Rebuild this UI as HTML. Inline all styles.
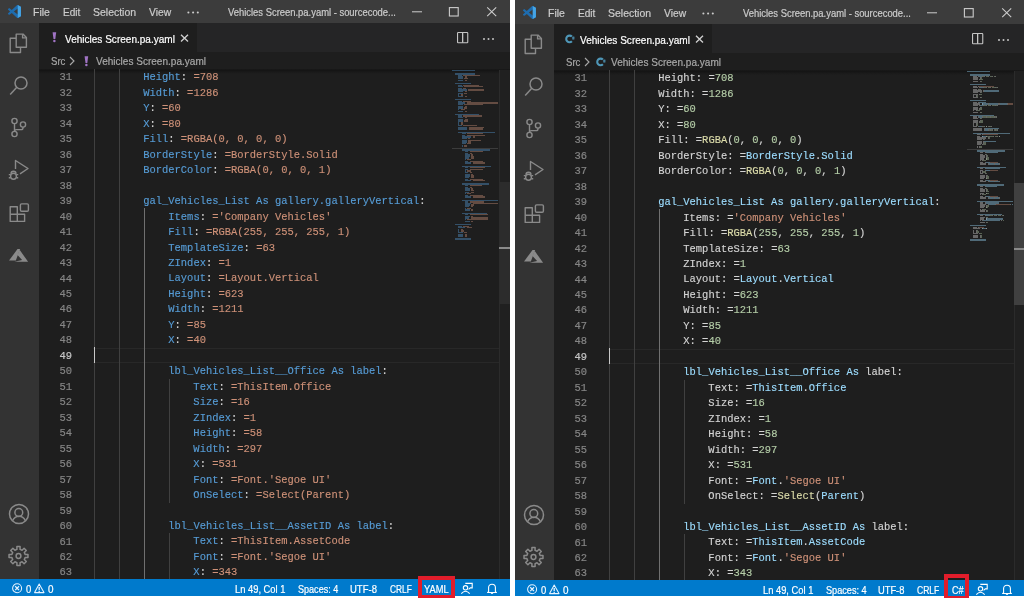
<!DOCTYPE html><html><head><meta charset="utf-8"><style>

*{margin:0;padding:0}
html,body{width:1024px;height:598px;overflow:hidden;background:#ffffff}
.win{position:absolute;height:598px}
.t{position:absolute;white-space:nowrap;font-family:"Liberation Sans",sans-serif;transform-origin:0 0;-webkit-text-stroke:0.2px}
.title{position:absolute;left:0;top:-1px;width:510px;height:24px;background:#3c3c3c}
.menu{position:absolute;top:5px;font:10.6px/14px "Liberation Sans",sans-serif;color:#cccccc;white-space:nowrap;transform-origin:0 0;transform:scaleX(0.96)}
.ttl{position:absolute;top:4.5px;font:10.6px/14px "Liberation Sans",sans-serif;color:#cccccc;white-space:nowrap;transform-origin:0 0;transform:scaleX(0.888)}
.act{position:absolute;left:0;top:23px;width:39px;height:556px;background:#333333}
.tabs{position:absolute;left:39px;top:23px;width:471px;height:28.6px;background:#252526}
.tab{position:absolute;left:39px;top:23px;width:158px;height:28.6px;background:#1e1e1e}
.tabt{position:absolute;top:31.3px;font:11.5px/14px "Liberation Sans",sans-serif;color:#ffffff;white-space:nowrap;transform-origin:0 0;transform:scaleX(0.883)}
.bc{position:absolute;top:54px;font:11px/14px "Liberation Sans",sans-serif;color:#a9a9a9;white-space:nowrap;transform-origin:0 0;transform:scaleX(0.913)}
.shadow{position:absolute;left:39px;top:51.6px;width:471px;height:528px;background:#1e1e1e}
.bshadow{position:absolute;left:39px;top:69px;width:471px;height:5px;background:linear-gradient(#191919,#151515 30%,#1a1a1a 65%,#1e1e1e)}
.curline{position:absolute;left:93px;width:406px;height:15.47px;box-sizing:border-box;border-top:1px solid #282828;border-bottom:1px solid #282828}
.guide{position:absolute;width:1px}
.ln{position:absolute;left:35.3px;width:37px;text-align:right;font:11.5px/15.47px "Liberation Mono",monospace;-webkit-text-stroke:0.2px;transform-origin:100% 0;transform:scaleX(0.909)}
.code{position:absolute;font:11.5px/15.47px "Liberation Mono",monospace;white-space:pre;color:#d4d4d4;-webkit-text-stroke:0.15px;transform-origin:0 0;transform:scaleX(0.90898)}
.mm{position:absolute;height:1.3px;opacity:.4}
.mmwrap{position:absolute;left:0;top:0;width:510px;height:598px;filter:blur(0.45px)}
.sbar{position:absolute;left:498.5px;top:70px;width:11.5px;height:509px;background:#202020;border-left:1px solid #2b2b2b;box-sizing:border-box}
.slider{position:absolute;left:499px;top:182px;width:11px;height:122px}
.status{position:absolute;left:0;top:578.8px;width:510px;height:16.9px;background:#007acc}
.st{position:absolute;top:581.3px;font:10.6px/15px "Liberation Sans",sans-serif;color:#ffffff;white-space:nowrap;transform-origin:0 0;transform:scaleX(0.86)}

</style></head><body>
<div class="win" style="left:0px;top:0px;width:510px">
<div class="title"></div>
<svg style="position:absolute;left:7.6px;top:4.8px" width="13" height="13" viewBox="0 0 100 100">
<path d="M96 10.8 75.4.9a6.2 6.2 0 0 0-7.1 1.2L29 38 11.9 25a4.1 4.1 0 0 0-5.3.2L1.1 30.3a4.1 4.1 0 0 0 0 6.1L15.9 50 1.1 63.6a4.1 4.1 0 0 0 0 6.1l5.5 5a4.1 4.1 0 0 0 5.3.2L29 62l39.3 35.9a6.2 6.2 0 0 0 7.1 1.2L96 89.2a6.2 6.2 0 0 0 3.5-5.6V16.4a6.2 6.2 0 0 0-3.5-5.6ZM75 72.7 45.1 50 75 27.3Z" fill="#1e6cae"/>
<path d="M75 0.9 75 99.1 96 89.2a6.2 6.2 0 0 0 3.5-5.6V16.4a6.2 6.2 0 0 0-3.5-5.6Z" fill="#45a5e6"/>
</svg>
<div class="t" style="left:33.36px;top:4.90px;font-size:10.75px;line-height:14px;color:#cccccc;transform:scaleX(0.9772);">File</div>
<div class="t" style="left:62.69px;top:4.90px;font-size:10.75px;line-height:14px;color:#cccccc;transform:scaleX(0.9388);">Edit</div>
<div class="t" style="left:93.28px;top:4.90px;font-size:10.75px;line-height:14px;color:#cccccc;transform:scaleX(0.9744);">Selection</div>
<div class="t" style="left:149.35px;top:4.90px;font-size:10.75px;line-height:14px;color:#cccccc;transform:scaleX(0.9584);">View</div>
<svg style="position:absolute;left:187px;top:10.7px" width="14" height="3" viewBox="0 0 14 3" fill="#cccccc"><circle cx="1.4" cy="1.5" r="1.05"/><circle cx="6.1" cy="1.5" r="1.05"/><circle cx="10.8" cy="1.5" r="1.05"/></svg>
<div class="t" style="left:228.15px;top:4.80px;font-size:10.75px;line-height:14px;color:#cccccc;transform:scaleX(0.8755);">Vehicles Screen.pa.yaml - sourcecode...</div>
<svg style="position:absolute;left:411px;top:6px" width="12" height="12" viewBox="0 0 12 12"><path d="M1 5.8h10" stroke="#cccccc" stroke-width="1"/></svg>
<svg style="position:absolute;left:448px;top:6px" width="12" height="12" viewBox="0 0 12 12"><rect x="1.4" y="1.6" width="8.8" height="8.4" fill="none" stroke="#cccccc" stroke-width="1.1"/></svg>
<svg style="position:absolute;left:486px;top:6px" width="12" height="12" viewBox="0 0 12 12"><path d="M1.2 1.4l9 8.7M10.2 1.4l-9 8.7" stroke="#cccccc" stroke-width="1.1"/></svg>
<div class="act"></div>
<svg style="position:absolute;left:9px;top:33px" width="20" height="21" viewBox="0 0 20 21" fill="none" stroke="#8a8a8a" stroke-width="1.4" stroke-linejoin="round">
<path d="M7.2 1.1H14l3.4 3.5v9.7H7.2z"/><path d="M13.6 1.3v3.6h3.6"/><path d="M7 5.3H1.2v14.2h10.3v-5"/></svg><svg style="position:absolute;left:9px;top:75px" width="20" height="21" viewBox="0 0 20 21" fill="none" stroke="#8a8a8a" stroke-width="1.5">
<circle cx="12" cy="8" r="6"/><path d="M7.8 12.3 1.2 19.5"/></svg><svg style="position:absolute;left:10px;top:116px" width="18" height="22" viewBox="0 0 18 22" fill="none" stroke="#8a8a8a" stroke-width="1.4">
<circle cx="4.5" cy="5" r="2.6"/><circle cx="4.5" cy="18" r="2.6"/><circle cx="13" cy="8.5" r="2.6"/><path d="M4.5 7.6v7.8"/><path d="M13 11.1v.6q0 1.9-1.9 1.9H6.4q-1.9 0-1.9 1.9"/></svg><svg style="position:absolute;left:8px;top:159px" width="22" height="22" viewBox="0 0 22 22" fill="none" stroke="#8a8a8a" stroke-width="1.4" stroke-linejoin="round">
<path d="M7.5 10V1.5L20 9.5 12 14.8"/><path d="M3 14.8a2.5 2.5 0 0 1 5 0"/><ellipse cx="5.5" cy="17.3" rx="2.9" ry="3"/><path d="M.8 15.6h1.8M8.4 15.6h1.8M.8 18.8h1.8M8.4 18.8h1.8"/></svg><svg style="position:absolute;left:9px;top:203px" width="21" height="20" viewBox="0 0 21 20" fill="none" stroke="#8a8a8a" stroke-width="1.4" stroke-linejoin="round">
<path d="M1.2 3.8H8.3V11.2H15.6V18.4H1.2Z"/><path d="M1.2 11.2H8.3V18.4"/><rect x="11.4" y="0.9" width="8" height="7.4" rx="1.2"/></svg><svg style="position:absolute;left:9px;top:247px" width="21" height="17" viewBox="0 0 21 17">
<path d="M8.5 2H11.1L6.8 13.6H0Z" fill="#8a8a8a"/><path d="M10.6 2.8 19.1 14.8H5.5L13.1 13 8.5 8Z" fill="#8a8a8a"/></svg><svg style="position:absolute;left:8px;top:503px" width="22" height="22" viewBox="0 0 22 22" fill="none" stroke="#8a8a8a" stroke-width="1.5">
<circle cx="11" cy="11" r="9.5"/><circle cx="10.8" cy="9.5" r="3.9"/><path d="M4.5 17.8c1.5-3 4-4.5 6.5-4.5s5 1.5 6.5 4.5"/></svg><svg style="position:absolute;left:7px;top:545px" width="23" height="23" viewBox="0 0 23 23" fill="none" stroke="#8a8a8a" stroke-width="1.5" stroke-linejoin="round">
<path d="M9.91 4.39 L9.92 1.53 L13.08 1.53 L13.09 4.39 L15.05 5.20 L17.08 3.19 L19.31 5.42 L17.30 7.45 L18.11 9.41 L20.97 9.42 L20.97 12.58 L18.11 12.59 L17.30 14.55 L19.31 16.58 L17.08 18.81 L15.05 16.80 L13.09 17.61 L13.08 20.47 L9.92 20.47 L9.91 17.61 L7.95 16.80 L5.92 18.81 L3.69 16.58 L5.70 14.55 L4.89 12.59 L2.03 12.58 L2.03 9.42 L4.89 9.41 L5.70 7.45 L3.69 5.42 L5.92 3.19 L7.95 5.20Z"/><circle cx="11.5" cy="11" r="2.4"/></svg>
<div class="tabs"></div>
<div class="tab"></div>
<svg style="position:absolute;left:52.2px;top:32.4px" width="5" height="11" viewBox="0 0 5 11">
<path d="M0.6 0.3H4.2L3.3 6.9H1.5Z" fill="#a074c4"/><circle cx="2.4" cy="9" r="1.25" fill="#a074c4"/></svg>
<div class="t" style="left:64.55px;top:31.55px;font-size:11.2px;line-height:14px;color:#ffffff;transform:scaleX(0.8970);">Vehicles Screen.pa.yaml</div>
<svg style="position:absolute;left:180px;top:34.3px" width="9" height="8" viewBox="0 0 9 8"><path d="M1 .8l7 6.6M8 .8l-7 6.6" stroke="#d0d0d0" stroke-width="1.35"/></svg>
<svg style="position:absolute;left:457px;top:32px" width="12" height="12" viewBox="0 0 12 12" fill="none" stroke="#c5c5c5" stroke-width="1.1"><rect x=".55" y=".55" width="10.2" height="10.2" rx=".6"/><path d="M5.65 .6v10.2" stroke-width="1.3"/></svg>
<svg style="position:absolute;left:482px;top:36.5px" width="14" height="4" viewBox="0 0 14 4" fill="#c5c5c5"><circle cx="2" cy="2" r="1"/><circle cx="6.5" cy="2" r="1"/><circle cx="11" cy="2" r="1"/></svg>
<div class="shadow"></div>
<svg style="position:absolute;left:84px;top:55.6px" width="5" height="11" viewBox="0 0 5 11">
<path d="M0.6 0.3H4.2L3.3 6.9H1.5Z" fill="#a074c4"/><circle cx="2.4" cy="9" r="1.25" fill="#a074c4"/></svg>
<div class="t" style="left:51.27px;top:54.35px;font-size:11.2px;line-height:14px;color:#a9a9a9;transform:scaleX(0.8554);">Src</div>
<svg style="position:absolute;left:69px;top:56px" width="6" height="10" viewBox="0 0 6 10"><path d="M1 1l4 4-4 4" fill="none" stroke="#a9a9a9" stroke-width="1.1"/></svg>
<div class="t" style="left:96.35px;top:54.35px;font-size:11.2px;line-height:14px;color:#a9a9a9;transform:scaleX(0.8978);">Vehicles Screen.pa.yaml</div>
<div class="bshadow"></div>
<div class="curline" style="top:347.56px"></div>
<div class="guide" style="left:93.60px;top:69.10px;height:15.77px;background:#404040"></div>
<div class="guide" style="left:118.69px;top:69.10px;height:15.77px;background:#404040"></div>
<div class="guide" style="left:93.60px;top:84.57px;height:15.77px;background:#404040"></div>
<div class="guide" style="left:118.69px;top:84.57px;height:15.77px;background:#404040"></div>
<div class="guide" style="left:93.60px;top:100.04px;height:15.77px;background:#404040"></div>
<div class="guide" style="left:118.69px;top:100.04px;height:15.77px;background:#404040"></div>
<div class="guide" style="left:93.60px;top:115.51px;height:15.77px;background:#404040"></div>
<div class="guide" style="left:118.69px;top:115.51px;height:15.77px;background:#404040"></div>
<div class="guide" style="left:93.60px;top:130.98px;height:15.77px;background:#404040"></div>
<div class="guide" style="left:118.69px;top:130.98px;height:15.77px;background:#404040"></div>
<div class="guide" style="left:93.60px;top:146.45px;height:15.77px;background:#404040"></div>
<div class="guide" style="left:118.69px;top:146.45px;height:15.77px;background:#404040"></div>
<div class="guide" style="left:93.60px;top:161.92px;height:15.77px;background:#404040"></div>
<div class="guide" style="left:118.69px;top:161.92px;height:15.77px;background:#404040"></div>
<div class="guide" style="left:93.60px;top:177.39px;height:15.77px;background:#404040"></div>
<div class="guide" style="left:118.69px;top:177.39px;height:15.77px;background:#404040"></div>
<div class="guide" style="left:93.60px;top:192.86px;height:15.77px;background:#404040"></div>
<div class="guide" style="left:118.69px;top:192.86px;height:15.77px;background:#404040"></div>
<div class="guide" style="left:93.60px;top:208.33px;height:15.77px;background:#404040"></div>
<div class="guide" style="left:118.69px;top:208.33px;height:15.77px;background:#404040"></div>
<div class="guide" style="left:143.78px;top:208.33px;height:15.77px;background:#707070"></div>
<div class="guide" style="left:93.60px;top:223.80px;height:15.77px;background:#404040"></div>
<div class="guide" style="left:118.69px;top:223.80px;height:15.77px;background:#404040"></div>
<div class="guide" style="left:143.78px;top:223.80px;height:15.77px;background:#707070"></div>
<div class="guide" style="left:93.60px;top:239.27px;height:15.77px;background:#404040"></div>
<div class="guide" style="left:118.69px;top:239.27px;height:15.77px;background:#404040"></div>
<div class="guide" style="left:143.78px;top:239.27px;height:15.77px;background:#707070"></div>
<div class="guide" style="left:93.60px;top:254.74px;height:15.77px;background:#404040"></div>
<div class="guide" style="left:118.69px;top:254.74px;height:15.77px;background:#404040"></div>
<div class="guide" style="left:143.78px;top:254.74px;height:15.77px;background:#707070"></div>
<div class="guide" style="left:93.60px;top:270.21px;height:15.77px;background:#404040"></div>
<div class="guide" style="left:118.69px;top:270.21px;height:15.77px;background:#404040"></div>
<div class="guide" style="left:143.78px;top:270.21px;height:15.77px;background:#707070"></div>
<div class="guide" style="left:93.60px;top:285.68px;height:15.77px;background:#404040"></div>
<div class="guide" style="left:118.69px;top:285.68px;height:15.77px;background:#404040"></div>
<div class="guide" style="left:143.78px;top:285.68px;height:15.77px;background:#707070"></div>
<div class="guide" style="left:93.60px;top:301.15px;height:15.77px;background:#404040"></div>
<div class="guide" style="left:118.69px;top:301.15px;height:15.77px;background:#404040"></div>
<div class="guide" style="left:143.78px;top:301.15px;height:15.77px;background:#707070"></div>
<div class="guide" style="left:93.60px;top:316.62px;height:15.77px;background:#404040"></div>
<div class="guide" style="left:118.69px;top:316.62px;height:15.77px;background:#404040"></div>
<div class="guide" style="left:143.78px;top:316.62px;height:15.77px;background:#707070"></div>
<div class="guide" style="left:93.60px;top:332.09px;height:15.77px;background:#404040"></div>
<div class="guide" style="left:118.69px;top:332.09px;height:15.77px;background:#404040"></div>
<div class="guide" style="left:143.78px;top:332.09px;height:15.77px;background:#707070"></div>
<div class="guide" style="left:93.60px;top:347.56px;height:15.77px;background:#404040"></div>
<div class="guide" style="left:118.69px;top:347.56px;height:15.77px;background:#404040"></div>
<div class="guide" style="left:143.78px;top:347.56px;height:15.77px;background:#707070"></div>
<div class="guide" style="left:93.60px;top:363.03px;height:15.77px;background:#404040"></div>
<div class="guide" style="left:118.69px;top:363.03px;height:15.77px;background:#404040"></div>
<div class="guide" style="left:143.78px;top:363.03px;height:15.77px;background:#707070"></div>
<div class="guide" style="left:93.60px;top:378.50px;height:15.77px;background:#404040"></div>
<div class="guide" style="left:118.69px;top:378.50px;height:15.77px;background:#404040"></div>
<div class="guide" style="left:143.78px;top:378.50px;height:15.77px;background:#707070"></div>
<div class="guide" style="left:168.86px;top:378.50px;height:15.77px;background:#404040"></div>
<div class="guide" style="left:93.60px;top:393.97px;height:15.77px;background:#404040"></div>
<div class="guide" style="left:118.69px;top:393.97px;height:15.77px;background:#404040"></div>
<div class="guide" style="left:143.78px;top:393.97px;height:15.77px;background:#707070"></div>
<div class="guide" style="left:168.86px;top:393.97px;height:15.77px;background:#404040"></div>
<div class="guide" style="left:93.60px;top:409.44px;height:15.77px;background:#404040"></div>
<div class="guide" style="left:118.69px;top:409.44px;height:15.77px;background:#404040"></div>
<div class="guide" style="left:143.78px;top:409.44px;height:15.77px;background:#707070"></div>
<div class="guide" style="left:168.86px;top:409.44px;height:15.77px;background:#404040"></div>
<div class="guide" style="left:93.60px;top:424.91px;height:15.77px;background:#404040"></div>
<div class="guide" style="left:118.69px;top:424.91px;height:15.77px;background:#404040"></div>
<div class="guide" style="left:143.78px;top:424.91px;height:15.77px;background:#707070"></div>
<div class="guide" style="left:168.86px;top:424.91px;height:15.77px;background:#404040"></div>
<div class="guide" style="left:93.60px;top:440.38px;height:15.77px;background:#404040"></div>
<div class="guide" style="left:118.69px;top:440.38px;height:15.77px;background:#404040"></div>
<div class="guide" style="left:143.78px;top:440.38px;height:15.77px;background:#707070"></div>
<div class="guide" style="left:168.86px;top:440.38px;height:15.77px;background:#404040"></div>
<div class="guide" style="left:93.60px;top:455.85px;height:15.77px;background:#404040"></div>
<div class="guide" style="left:118.69px;top:455.85px;height:15.77px;background:#404040"></div>
<div class="guide" style="left:143.78px;top:455.85px;height:15.77px;background:#707070"></div>
<div class="guide" style="left:168.86px;top:455.85px;height:15.77px;background:#404040"></div>
<div class="guide" style="left:93.60px;top:471.32px;height:15.77px;background:#404040"></div>
<div class="guide" style="left:118.69px;top:471.32px;height:15.77px;background:#404040"></div>
<div class="guide" style="left:143.78px;top:471.32px;height:15.77px;background:#707070"></div>
<div class="guide" style="left:168.86px;top:471.32px;height:15.77px;background:#404040"></div>
<div class="guide" style="left:93.60px;top:486.79px;height:15.77px;background:#404040"></div>
<div class="guide" style="left:118.69px;top:486.79px;height:15.77px;background:#404040"></div>
<div class="guide" style="left:143.78px;top:486.79px;height:15.77px;background:#707070"></div>
<div class="guide" style="left:168.86px;top:486.79px;height:15.77px;background:#404040"></div>
<div class="guide" style="left:93.60px;top:502.26px;height:15.77px;background:#404040"></div>
<div class="guide" style="left:118.69px;top:502.26px;height:15.77px;background:#404040"></div>
<div class="guide" style="left:143.78px;top:502.26px;height:15.77px;background:#707070"></div>
<div class="guide" style="left:93.60px;top:517.73px;height:15.77px;background:#404040"></div>
<div class="guide" style="left:118.69px;top:517.73px;height:15.77px;background:#404040"></div>
<div class="guide" style="left:143.78px;top:517.73px;height:15.77px;background:#707070"></div>
<div class="guide" style="left:93.60px;top:533.20px;height:15.77px;background:#404040"></div>
<div class="guide" style="left:118.69px;top:533.20px;height:15.77px;background:#404040"></div>
<div class="guide" style="left:143.78px;top:533.20px;height:15.77px;background:#707070"></div>
<div class="guide" style="left:168.86px;top:533.20px;height:15.77px;background:#404040"></div>
<div class="guide" style="left:93.60px;top:548.67px;height:15.77px;background:#404040"></div>
<div class="guide" style="left:118.69px;top:548.67px;height:15.77px;background:#404040"></div>
<div class="guide" style="left:143.78px;top:548.67px;height:15.77px;background:#707070"></div>
<div class="guide" style="left:168.86px;top:548.67px;height:15.77px;background:#404040"></div>
<div class="guide" style="left:93.60px;top:564.14px;height:15.77px;background:#404040"></div>
<div class="guide" style="left:118.69px;top:564.14px;height:15.77px;background:#404040"></div>
<div class="guide" style="left:143.78px;top:564.14px;height:15.77px;background:#707070"></div>
<div class="guide" style="left:168.86px;top:564.14px;height:15.77px;background:#404040"></div>
<div style="position:absolute;left:93.6px;top:347.06px;width:1.6px;height:15.67px;background:#c8c8c8"></div>
<div class="ln" style="top:69.40px;color:#858585">31</div>
<div class="ln" style="top:84.87px;color:#858585">32</div>
<div class="ln" style="top:100.34px;color:#858585">33</div>
<div class="ln" style="top:115.81px;color:#858585">34</div>
<div class="ln" style="top:131.28px;color:#858585">35</div>
<div class="ln" style="top:146.75px;color:#858585">36</div>
<div class="ln" style="top:162.22px;color:#858585">37</div>
<div class="ln" style="top:177.69px;color:#858585">38</div>
<div class="ln" style="top:193.16px;color:#858585">39</div>
<div class="ln" style="top:208.63px;color:#858585">40</div>
<div class="ln" style="top:224.10px;color:#858585">41</div>
<div class="ln" style="top:239.57px;color:#858585">42</div>
<div class="ln" style="top:255.04px;color:#858585">43</div>
<div class="ln" style="top:270.51px;color:#858585">44</div>
<div class="ln" style="top:285.98px;color:#858585">45</div>
<div class="ln" style="top:301.45px;color:#858585">46</div>
<div class="ln" style="top:316.92px;color:#858585">47</div>
<div class="ln" style="top:332.39px;color:#858585">48</div>
<div class="ln" style="top:347.86px;color:#c6c6c6">49</div>
<div class="ln" style="top:363.33px;color:#858585">50</div>
<div class="ln" style="top:378.80px;color:#858585">51</div>
<div class="ln" style="top:394.27px;color:#858585">52</div>
<div class="ln" style="top:409.74px;color:#858585">53</div>
<div class="ln" style="top:425.21px;color:#858585">54</div>
<div class="ln" style="top:440.68px;color:#858585">55</div>
<div class="ln" style="top:456.15px;color:#858585">56</div>
<div class="ln" style="top:471.62px;color:#858585">57</div>
<div class="ln" style="top:487.09px;color:#858585">58</div>
<div class="ln" style="top:502.56px;color:#858585">59</div>
<div class="ln" style="top:518.03px;color:#858585">60</div>
<div class="ln" style="top:533.50px;color:#858585">61</div>
<div class="ln" style="top:548.97px;color:#858585">62</div>
<div class="ln" style="top:564.44px;color:#858585">63</div>
<div class="code" style="top:69.39999999999999px;left:93.3px">        <span style="color:#569cd6">Height</span><span style="color:#d4d4d4">: </span><span style="color:#ce9178">=708</span><br>        <span style="color:#569cd6">Width</span><span style="color:#d4d4d4">: </span><span style="color:#ce9178">=1286</span><br>        <span style="color:#569cd6">Y</span><span style="color:#d4d4d4">: </span><span style="color:#ce9178">=60</span><br>        <span style="color:#569cd6">X</span><span style="color:#d4d4d4">: </span><span style="color:#ce9178">=80</span><br>        <span style="color:#569cd6">Fill</span><span style="color:#d4d4d4">: </span><span style="color:#ce9178">=RGBA(0, 0, 0, 0)</span><br>        <span style="color:#569cd6">BorderStyle</span><span style="color:#d4d4d4">: </span><span style="color:#ce9178">=BorderStyle.Solid</span><br>        <span style="color:#569cd6">BorderColor</span><span style="color:#d4d4d4">: </span><span style="color:#ce9178">=RGBA(0, 0, 0, 1)</span><br>&nbsp;<br>        <span style="color:#569cd6">gal_Vehicles_List As gallery.galleryVertical</span><span style="color:#d4d4d4">:</span><br>            <span style="color:#569cd6">Items</span><span style="color:#d4d4d4">: </span><span style="color:#ce9178">='Company Vehicles'</span><br>            <span style="color:#569cd6">Fill</span><span style="color:#d4d4d4">: </span><span style="color:#ce9178">=RGBA(255, 255, 255, 1)</span><br>            <span style="color:#569cd6">TemplateSize</span><span style="color:#d4d4d4">: </span><span style="color:#ce9178">=63</span><br>            <span style="color:#569cd6">ZIndex</span><span style="color:#d4d4d4">: </span><span style="color:#ce9178">=1</span><br>            <span style="color:#569cd6">Layout</span><span style="color:#d4d4d4">: </span><span style="color:#ce9178">=Layout.Vertical</span><br>            <span style="color:#569cd6">Height</span><span style="color:#d4d4d4">: </span><span style="color:#ce9178">=623</span><br>            <span style="color:#569cd6">Width</span><span style="color:#d4d4d4">: </span><span style="color:#ce9178">=1211</span><br>            <span style="color:#569cd6">Y</span><span style="color:#d4d4d4">: </span><span style="color:#ce9178">=85</span><br>            <span style="color:#569cd6">X</span><span style="color:#d4d4d4">: </span><span style="color:#ce9178">=40</span><br>&nbsp;<br>            <span style="color:#569cd6">lbl_Vehicles_List__Office As label</span><span style="color:#d4d4d4">:</span><br>                <span style="color:#569cd6">Text</span><span style="color:#d4d4d4">: </span><span style="color:#ce9178">=ThisItem.Office</span><br>                <span style="color:#569cd6">Size</span><span style="color:#d4d4d4">: </span><span style="color:#ce9178">=16</span><br>                <span style="color:#569cd6">ZIndex</span><span style="color:#d4d4d4">: </span><span style="color:#ce9178">=1</span><br>                <span style="color:#569cd6">Height</span><span style="color:#d4d4d4">: </span><span style="color:#ce9178">=58</span><br>                <span style="color:#569cd6">Width</span><span style="color:#d4d4d4">: </span><span style="color:#ce9178">=297</span><br>                <span style="color:#569cd6">X</span><span style="color:#d4d4d4">: </span><span style="color:#ce9178">=531</span><br>                <span style="color:#569cd6">Font</span><span style="color:#d4d4d4">: </span><span style="color:#ce9178">=Font.'Segoe UI'</span><br>                <span style="color:#569cd6">OnSelect</span><span style="color:#d4d4d4">: </span><span style="color:#ce9178">=Select(Parent)</span><br>&nbsp;<br>            <span style="color:#569cd6">lbl_Vehicles_List__AssetID As label</span><span style="color:#d4d4d4">:</span><br>                <span style="color:#569cd6">Text</span><span style="color:#d4d4d4">: </span><span style="color:#ce9178">=ThisItem.AssetCode</span><br>                <span style="color:#569cd6">Font</span><span style="color:#d4d4d4">: </span><span style="color:#ce9178">=Font.'Segoe UI'</span><br>                <span style="color:#569cd6">X</span><span style="color:#d4d4d4">: </span><span style="color:#ce9178">=343</span></div>
<div class="mmwrap"><div class="mm" style="left:452.00px;top:70.00px;width:22.68px;background:#569cd6"></div>
<div class="mm" style="left:455.24px;top:73.24px;width:20.25px;background:#569cd6"></div>
<div class="mm" style="left:458.48px;top:74.86px;width:3.24px;background:#569cd6"></div>
<div class="mm" style="left:463.34px;top:74.86px;width:17.01px;background:#ce9178"></div>
<div class="mm" style="left:458.48px;top:76.48px;width:4.86px;background:#569cd6"></div>
<div class="mm" style="left:464.96px;top:76.48px;width:2.43px;background:#ce9178"></div>
<div class="mm" style="left:458.48px;top:78.10px;width:4.05px;background:#569cd6"></div>
<div class="mm" style="left:464.15px;top:78.10px;width:4.05px;background:#ce9178"></div>
<div class="mm" style="left:458.48px;top:79.72px;width:4.86px;background:#569cd6"></div>
<div class="mm" style="left:464.96px;top:79.72px;width:1.62px;background:#ce9178"></div>
<div class="mm" style="left:455.24px;top:82.96px;width:15.39px;background:#569cd6"></div>
<div class="mm" style="left:458.48px;top:84.58px;width:3.24px;background:#569cd6"></div>
<div class="mm" style="left:463.34px;top:84.58px;width:15.39px;background:#ce9178"></div>
<div class="mm" style="left:458.48px;top:86.20px;width:4.05px;background:#569cd6"></div>
<div class="mm" style="left:464.15px;top:86.20px;width:18.63px;background:#ce9178"></div>
<div class="mm" style="left:458.48px;top:87.82px;width:3.24px;background:#569cd6"></div>
<div class="mm" style="left:463.34px;top:87.82px;width:2.43px;background:#ce9178"></div>
<div class="mm" style="left:458.48px;top:89.44px;width:8.10px;background:#569cd6"></div>
<div class="mm" style="left:468.20px;top:89.44px;width:16.20px;background:#ce9178"></div>
<div class="mm" style="left:458.48px;top:91.06px;width:4.86px;background:#569cd6"></div>
<div class="mm" style="left:464.96px;top:91.06px;width:2.43px;background:#ce9178"></div>
<div class="mm" style="left:458.48px;top:92.68px;width:4.05px;background:#569cd6"></div>
<div class="mm" style="left:464.15px;top:92.68px;width:3.24px;background:#ce9178"></div>
<div class="mm" style="left:458.48px;top:94.30px;width:0.81px;background:#569cd6"></div>
<div class="mm" style="left:460.91px;top:94.30px;width:2.43px;background:#ce9178"></div>
<div class="mm" style="left:458.48px;top:95.92px;width:4.86px;background:#569cd6"></div>
<div class="mm" style="left:464.96px;top:95.92px;width:1.62px;background:#ce9178"></div>
<div class="mm" style="left:455.24px;top:99.16px;width:16.20px;background:#569cd6"></div>
<div class="mm" style="left:458.48px;top:100.78px;width:3.24px;background:#569cd6"></div>
<div class="mm" style="left:463.34px;top:100.78px;width:7.29px;background:#ce9178"></div>
<div class="mm" style="left:458.48px;top:102.40px;width:6.48px;background:#569cd6"></div>
<div class="mm" style="left:466.58px;top:102.40px;width:31.42px;background:#ce9178"></div>
<div class="mm" style="left:458.48px;top:104.02px;width:4.05px;background:#569cd6"></div>
<div class="mm" style="left:464.15px;top:104.02px;width:18.63px;background:#ce9178"></div>
<div class="mm" style="left:458.48px;top:105.64px;width:4.86px;background:#569cd6"></div>
<div class="mm" style="left:464.96px;top:105.64px;width:2.43px;background:#ce9178"></div>
<div class="mm" style="left:458.48px;top:107.26px;width:4.05px;background:#569cd6"></div>
<div class="mm" style="left:464.15px;top:107.26px;width:2.43px;background:#ce9178"></div>
<div class="mm" style="left:458.48px;top:108.88px;width:0.81px;background:#569cd6"></div>
<div class="mm" style="left:460.91px;top:108.88px;width:4.05px;background:#ce9178"></div>
<div class="mm" style="left:458.48px;top:110.50px;width:4.86px;background:#569cd6"></div>
<div class="mm" style="left:464.96px;top:110.50px;width:1.62px;background:#ce9178"></div>
<div class="mm" style="left:455.24px;top:113.74px;width:23.49px;background:#569cd6"></div>
<div class="mm" style="left:458.48px;top:115.36px;width:3.24px;background:#569cd6"></div>
<div class="mm" style="left:463.34px;top:115.36px;width:18.63px;background:#ce9178"></div>
<div class="mm" style="left:458.48px;top:116.98px;width:4.86px;background:#569cd6"></div>
<div class="mm" style="left:464.96px;top:116.98px;width:1.62px;background:#ce9178"></div>
<div class="mm" style="left:458.48px;top:118.60px;width:4.86px;background:#569cd6"></div>
<div class="mm" style="left:464.96px;top:118.60px;width:3.24px;background:#ce9178"></div>
<div class="mm" style="left:458.48px;top:120.22px;width:4.05px;background:#569cd6"></div>
<div class="mm" style="left:464.15px;top:120.22px;width:4.05px;background:#ce9178"></div>
<div class="mm" style="left:458.48px;top:121.84px;width:0.81px;background:#569cd6"></div>
<div class="mm" style="left:460.91px;top:121.84px;width:2.43px;background:#ce9178"></div>
<div class="mm" style="left:458.48px;top:123.46px;width:0.81px;background:#569cd6"></div>
<div class="mm" style="left:460.91px;top:123.46px;width:2.43px;background:#ce9178"></div>
<div class="mm" style="left:458.48px;top:125.08px;width:3.24px;background:#569cd6"></div>
<div class="mm" style="left:463.34px;top:125.08px;width:13.77px;background:#ce9178"></div>
<div class="mm" style="left:458.48px;top:126.70px;width:8.91px;background:#569cd6"></div>
<div class="mm" style="left:469.01px;top:126.70px;width:14.58px;background:#ce9178"></div>
<div class="mm" style="left:458.48px;top:128.32px;width:8.91px;background:#569cd6"></div>
<div class="mm" style="left:469.01px;top:128.32px;width:13.77px;background:#ce9178"></div>
<div class="mm" style="left:458.48px;top:131.56px;width:36.45px;background:#569cd6"></div>
<div class="mm" style="left:461.72px;top:133.18px;width:4.05px;background:#569cd6"></div>
<div class="mm" style="left:467.39px;top:133.18px;width:15.39px;background:#ce9178"></div>
<div class="mm" style="left:461.72px;top:134.80px;width:3.24px;background:#569cd6"></div>
<div class="mm" style="left:466.58px;top:134.80px;width:18.63px;background:#ce9178"></div>
<div class="mm" style="left:461.72px;top:136.42px;width:9.72px;background:#569cd6"></div>
<div class="mm" style="left:473.06px;top:136.42px;width:2.43px;background:#ce9178"></div>
<div class="mm" style="left:461.72px;top:138.04px;width:4.86px;background:#569cd6"></div>
<div class="mm" style="left:468.20px;top:138.04px;width:1.62px;background:#ce9178"></div>
<div class="mm" style="left:461.72px;top:139.66px;width:4.86px;background:#569cd6"></div>
<div class="mm" style="left:468.20px;top:139.66px;width:12.96px;background:#ce9178"></div>
<div class="mm" style="left:461.72px;top:141.28px;width:4.86px;background:#569cd6"></div>
<div class="mm" style="left:468.20px;top:141.28px;width:3.24px;background:#ce9178"></div>
<div class="mm" style="left:461.72px;top:142.90px;width:4.05px;background:#569cd6"></div>
<div class="mm" style="left:467.39px;top:142.90px;width:4.05px;background:#ce9178"></div>
<div class="mm" style="left:461.72px;top:144.52px;width:0.81px;background:#569cd6"></div>
<div class="mm" style="left:464.15px;top:144.52px;width:2.43px;background:#ce9178"></div>
<div class="mm" style="left:461.72px;top:146.14px;width:0.81px;background:#569cd6"></div>
<div class="mm" style="left:464.15px;top:146.14px;width:2.43px;background:#ce9178"></div>
<div class="mm" style="left:461.72px;top:149.38px;width:28.35px;background:#569cd6"></div>
<div class="mm" style="left:464.96px;top:151.00px;width:3.24px;background:#569cd6"></div>
<div class="mm" style="left:469.82px;top:151.00px;width:12.96px;background:#ce9178"></div>
<div class="mm" style="left:464.96px;top:152.62px;width:3.24px;background:#569cd6"></div>
<div class="mm" style="left:469.82px;top:152.62px;width:2.43px;background:#ce9178"></div>
<div class="mm" style="left:464.96px;top:154.24px;width:4.86px;background:#569cd6"></div>
<div class="mm" style="left:471.44px;top:154.24px;width:1.62px;background:#ce9178"></div>
<div class="mm" style="left:464.96px;top:155.86px;width:4.86px;background:#569cd6"></div>
<div class="mm" style="left:471.44px;top:155.86px;width:2.43px;background:#ce9178"></div>
<div class="mm" style="left:464.96px;top:157.48px;width:4.05px;background:#569cd6"></div>
<div class="mm" style="left:470.63px;top:157.48px;width:3.24px;background:#ce9178"></div>
<div class="mm" style="left:464.96px;top:159.10px;width:0.81px;background:#569cd6"></div>
<div class="mm" style="left:467.39px;top:159.10px;width:3.24px;background:#ce9178"></div>
<div class="mm" style="left:464.96px;top:160.72px;width:3.24px;background:#569cd6"></div>
<div class="mm" style="left:469.82px;top:160.72px;width:12.96px;background:#ce9178"></div>
<div class="mm" style="left:464.96px;top:162.34px;width:6.48px;background:#569cd6"></div>
<div class="mm" style="left:473.06px;top:162.34px;width:12.15px;background:#ce9178"></div>
<div class="mm" style="left:461.72px;top:165.58px;width:29.16px;background:#569cd6"></div>
<div class="mm" style="left:464.96px;top:167.20px;width:3.24px;background:#569cd6"></div>
<div class="mm" style="left:469.82px;top:167.20px;width:15.39px;background:#ce9178"></div>
<div class="mm" style="left:464.96px;top:168.82px;width:3.24px;background:#569cd6"></div>
<div class="mm" style="left:469.82px;top:168.82px;width:12.96px;background:#ce9178"></div>
<div class="mm" style="left:464.96px;top:170.44px;width:0.81px;background:#569cd6"></div>
<div class="mm" style="left:467.39px;top:170.44px;width:3.24px;background:#ce9178"></div>
<div class="mm" style="left:464.96px;top:172.06px;width:3.24px;background:#569cd6"></div>
<div class="mm" style="left:469.82px;top:172.06px;width:2.43px;background:#ce9178"></div>
<div class="mm" style="left:464.96px;top:173.68px;width:4.86px;background:#569cd6"></div>
<div class="mm" style="left:471.44px;top:173.68px;width:1.62px;background:#ce9178"></div>
<div class="mm" style="left:464.96px;top:175.30px;width:4.86px;background:#569cd6"></div>
<div class="mm" style="left:471.44px;top:175.30px;width:2.43px;background:#ce9178"></div>
<div class="mm" style="left:464.96px;top:176.92px;width:4.05px;background:#569cd6"></div>
<div class="mm" style="left:470.63px;top:176.92px;width:3.24px;background:#ce9178"></div>
<div class="mm" style="left:464.96px;top:178.54px;width:3.24px;background:#569cd6"></div>
<div class="mm" style="left:469.82px;top:178.54px;width:12.96px;background:#ce9178"></div>
<div class="mm" style="left:464.96px;top:180.16px;width:6.48px;background:#569cd6"></div>
<div class="mm" style="left:473.06px;top:180.16px;width:12.15px;background:#ce9178"></div>
<div class="mm" style="left:461.72px;top:183.40px;width:27.54px;background:#569cd6"></div>
<div class="mm" style="left:464.96px;top:185.02px;width:3.24px;background:#569cd6"></div>
<div class="mm" style="left:469.82px;top:185.02px;width:12.15px;background:#ce9178"></div>
<div class="mm" style="left:464.96px;top:186.64px;width:3.24px;background:#569cd6"></div>
<div class="mm" style="left:469.82px;top:186.64px;width:2.43px;background:#ce9178"></div>
<div class="mm" style="left:464.96px;top:188.26px;width:4.86px;background:#569cd6"></div>
<div class="mm" style="left:471.44px;top:188.26px;width:1.62px;background:#ce9178"></div>
<div class="mm" style="left:464.96px;top:189.88px;width:4.86px;background:#569cd6"></div>
<div class="mm" style="left:471.44px;top:189.88px;width:2.43px;background:#ce9178"></div>
<div class="mm" style="left:464.96px;top:191.50px;width:4.05px;background:#569cd6"></div>
<div class="mm" style="left:470.63px;top:191.50px;width:3.24px;background:#ce9178"></div>
<div class="mm" style="left:464.96px;top:193.12px;width:0.81px;background:#569cd6"></div>
<div class="mm" style="left:467.39px;top:193.12px;width:3.24px;background:#ce9178"></div>
<div class="mm" style="left:464.96px;top:194.74px;width:3.24px;background:#569cd6"></div>
<div class="mm" style="left:469.82px;top:194.74px;width:12.96px;background:#ce9178"></div>
<div class="mm" style="left:464.96px;top:196.36px;width:6.48px;background:#569cd6"></div>
<div class="mm" style="left:473.06px;top:196.36px;width:12.15px;background:#ce9178"></div>
<div class="mm" style="left:461.72px;top:199.60px;width:36.28px;background:#569cd6"></div>
<div class="mm" style="left:464.96px;top:201.22px;width:3.24px;background:#569cd6"></div>
<div class="mm" style="left:469.82px;top:201.22px;width:14.58px;background:#ce9178"></div>
<div class="mm" style="left:464.96px;top:202.84px;width:6.48px;background:#569cd6"></div>
<div class="mm" style="left:473.06px;top:202.84px;width:24.94px;background:#ce9178"></div>
<div class="mm" style="left:464.96px;top:204.46px;width:4.86px;background:#569cd6"></div>
<div class="mm" style="left:471.44px;top:204.46px;width:2.43px;background:#ce9178"></div>
<div class="mm" style="left:464.96px;top:206.08px;width:4.05px;background:#569cd6"></div>
<div class="mm" style="left:470.63px;top:206.08px;width:2.43px;background:#ce9178"></div>
<div class="mm" style="left:464.96px;top:207.70px;width:0.81px;background:#569cd6"></div>
<div class="mm" style="left:467.39px;top:207.70px;width:4.05px;background:#ce9178"></div>
<div class="mm" style="left:464.96px;top:209.32px;width:4.86px;background:#569cd6"></div>
<div class="mm" style="left:471.44px;top:209.32px;width:1.62px;background:#ce9178"></div>
<div class="mm" style="left:461.72px;top:212.56px;width:25.11px;background:#569cd6"></div>
<div class="mm" style="left:464.96px;top:214.18px;width:3.24px;background:#569cd6"></div>
<div class="mm" style="left:469.82px;top:214.18px;width:18.63px;background:#ce9178"></div>
<div class="mm" style="left:464.96px;top:215.80px;width:4.86px;background:#569cd6"></div>
<div class="mm" style="left:471.44px;top:215.80px;width:1.62px;background:#ce9178"></div>
<div class="mm" style="left:464.96px;top:217.42px;width:4.05px;background:#569cd6"></div>
<div class="mm" style="left:470.63px;top:217.42px;width:17.01px;background:#ce9178"></div>
<div class="mm" style="left:464.96px;top:219.04px;width:0.81px;background:#569cd6"></div>
<div class="mm" style="left:467.39px;top:219.04px;width:21.06px;background:#ce9178"></div>
<div class="mm" style="left:464.96px;top:220.66px;width:4.86px;background:#569cd6"></div>
<div class="mm" style="left:471.44px;top:220.66px;width:1.62px;background:#ce9178"></div>
<div class="mm" style="left:455.24px;top:223.90px;width:15.39px;background:#569cd6"></div>
<div class="mm" style="left:458.48px;top:225.52px;width:3.24px;background:#569cd6"></div>
<div class="mm" style="left:463.34px;top:225.52px;width:5.67px;background:#ce9178"></div>
<div class="mm" style="left:458.48px;top:227.14px;width:6.48px;background:#569cd6"></div>
<div class="mm" style="left:466.58px;top:227.14px;width:5.67px;background:#ce9178"></div>
<div class="mm" style="left:458.48px;top:228.76px;width:0.81px;background:#569cd6"></div>
<div class="mm" style="left:460.91px;top:228.76px;width:2.43px;background:#ce9178"></div>
<div class="mm" style="left:458.48px;top:230.38px;width:0.81px;background:#569cd6"></div>
<div class="mm" style="left:460.91px;top:230.38px;width:3.24px;background:#ce9178"></div>
<div class="mm" style="left:458.48px;top:232.00px;width:4.05px;background:#569cd6"></div>
<div class="mm" style="left:464.15px;top:232.00px;width:3.24px;background:#ce9178"></div>
<div class="mm" style="left:458.48px;top:233.62px;width:4.86px;background:#569cd6"></div>
<div class="mm" style="left:464.96px;top:233.62px;width:2.43px;background:#ce9178"></div>
<div class="mm" style="left:458.48px;top:235.24px;width:4.86px;background:#569cd6"></div>
<div class="mm" style="left:464.96px;top:235.24px;width:1.62px;background:#ce9178"></div>
<div class="mm" style="left:455.24px;top:238.48px;width:15.39px;background:#569cd6"></div>
<div style="position:absolute;left:452px;top:147.76px;width:46px;height:1.2px;background:#3c3c3c"></div></div>
<div class="sbar"></div>
<div class="slider" style="background:#2c2c2c"></div>
<div style="position:absolute;left:499px;top:247px;width:11px;height:2px;background:#8a8a8a"></div>
<div class="status"></div>
<svg style="position:absolute;left:12px;top:583px" width="11" height="11" viewBox="0 0 11 11" fill="none" stroke="#e6f3ff" stroke-width="1.05"><circle cx="5.1" cy="5.2" r="4.5"/><path d="M3.2 3.3l3.8 3.8M7 3.3l-3.8 3.8" stroke-width="1.25"/></svg>
<div class="t" style="left:25.62px;top:581.70px;font-size:10.75px;line-height:14px;color:#ffffff;transform:scaleX(0.8813);">0</div>
<svg style="position:absolute;left:34px;top:582.5px" width="11" height="11" viewBox="0 0 11 11" fill="none" stroke="#e6f3ff" stroke-width="1.05" stroke-linejoin="round"><path d="M5.2 1 10 9.6H.6z"/><path d="M5.2 4v3.2M5.2 8v.9" stroke-width="1.3"/></svg>
<div class="t" style="left:47.60px;top:581.70px;font-size:10.75px;line-height:14px;color:#ffffff;transform:scaleX(0.9204);">0</div>
<div class="t" style="left:234.75px;top:581.70px;font-size:10.75px;line-height:14px;color:#ffffff;transform:scaleX(0.8701);">Ln 49, Col 1</div>
<div class="t" style="left:297.99px;top:581.70px;font-size:10.75px;line-height:14px;color:#ffffff;transform:scaleX(0.8430);">Spaces: 4</div>
<div class="t" style="left:350.29px;top:581.70px;font-size:10.75px;line-height:14px;color:#ffffff;transform:scaleX(0.8840);">UTF-8</div>
<div class="t" style="left:389.58px;top:581.70px;font-size:10.75px;line-height:14px;color:#ffffff;transform:scaleX(0.7752);">CRLF</div>
<div class="t" style="left:424.47px;top:581.70px;font-size:10.75px;line-height:14px;color:#ffffff;transform:scaleX(0.8639);">YAML</div>
<div style="position:absolute;left:418.3px;top:575.8px;width:36.70px;height:22.20px;box-sizing:border-box;border:4.6px solid #e21d2b;border-bottom-width:3.6px"></div>
<svg style="position:absolute;left:460px;top:582px" width="14" height="12" viewBox="0 0 14 12" fill="none" stroke="#fff" stroke-width="1.1"><circle cx="5.5" cy="5.8" r="2.2"/><path d="M1.3 11.6Q5.5 6.8 9.7 11.6"/><path d="M5.3 1.4H12.2V5.9H10.3L8.6 7.4"/></svg>
<svg style="position:absolute;left:487px;top:582.5px" width="10" height="11" viewBox="0 0 10 11" fill="none" stroke="#fff" stroke-width="1.1"><path d="M1.6 8.6V4.6a3.4 3.4 0 0 1 6.8 0v4l.8.9H.8z"/><path d="M3.9 10.3h2.2"/></svg>
</div>
<div class="win" style="left:515px;top:1px;width:509px">
<div class="title"></div>
<svg style="position:absolute;left:7.6px;top:4.8px" width="13" height="13" viewBox="0 0 100 100">
<path d="M96 10.8 75.4.9a6.2 6.2 0 0 0-7.1 1.2L29 38 11.9 25a4.1 4.1 0 0 0-5.3.2L1.1 30.3a4.1 4.1 0 0 0 0 6.1L15.9 50 1.1 63.6a4.1 4.1 0 0 0 0 6.1l5.5 5a4.1 4.1 0 0 0 5.3.2L29 62l39.3 35.9a6.2 6.2 0 0 0 7.1 1.2L96 89.2a6.2 6.2 0 0 0 3.5-5.6V16.4a6.2 6.2 0 0 0-3.5-5.6ZM75 72.7 45.1 50 75 27.3Z" fill="#1e6cae"/>
<path d="M75 0.9 75 99.1 96 89.2a6.2 6.2 0 0 0 3.5-5.6V16.4a6.2 6.2 0 0 0-3.5-5.6Z" fill="#45a5e6"/>
</svg>
<div class="t" style="left:33.36px;top:4.90px;font-size:10.75px;line-height:14px;color:#cccccc;transform:scaleX(0.9772);">File</div>
<div class="t" style="left:62.69px;top:4.90px;font-size:10.75px;line-height:14px;color:#cccccc;transform:scaleX(0.9388);">Edit</div>
<div class="t" style="left:93.28px;top:4.90px;font-size:10.75px;line-height:14px;color:#cccccc;transform:scaleX(0.9744);">Selection</div>
<div class="t" style="left:149.35px;top:4.90px;font-size:10.75px;line-height:14px;color:#cccccc;transform:scaleX(0.9584);">View</div>
<svg style="position:absolute;left:187px;top:10.7px" width="14" height="3" viewBox="0 0 14 3" fill="#cccccc"><circle cx="1.4" cy="1.5" r="1.05"/><circle cx="6.1" cy="1.5" r="1.05"/><circle cx="10.8" cy="1.5" r="1.05"/></svg>
<div class="t" style="left:228.15px;top:4.80px;font-size:10.75px;line-height:14px;color:#cccccc;transform:scaleX(0.8755);">Vehicles Screen.pa.yaml - sourcecode...</div>
<svg style="position:absolute;left:411px;top:6px" width="12" height="12" viewBox="0 0 12 12"><path d="M1 5.8h10" stroke="#cccccc" stroke-width="1"/></svg>
<svg style="position:absolute;left:448px;top:6px" width="12" height="12" viewBox="0 0 12 12"><rect x="1.4" y="1.6" width="8.8" height="8.4" fill="none" stroke="#cccccc" stroke-width="1.1"/></svg>
<svg style="position:absolute;left:486px;top:6px" width="12" height="12" viewBox="0 0 12 12"><path d="M1.2 1.4l9 8.7M10.2 1.4l-9 8.7" stroke="#cccccc" stroke-width="1.1"/></svg>
<div class="act"></div>
<svg style="position:absolute;left:9px;top:33px" width="20" height="21" viewBox="0 0 20 21" fill="none" stroke="#8a8a8a" stroke-width="1.4" stroke-linejoin="round">
<path d="M7.2 1.1H14l3.4 3.5v9.7H7.2z"/><path d="M13.6 1.3v3.6h3.6"/><path d="M7 5.3H1.2v14.2h10.3v-5"/></svg><svg style="position:absolute;left:9px;top:75px" width="20" height="21" viewBox="0 0 20 21" fill="none" stroke="#8a8a8a" stroke-width="1.5">
<circle cx="12" cy="8" r="6"/><path d="M7.8 12.3 1.2 19.5"/></svg><svg style="position:absolute;left:10px;top:116px" width="18" height="22" viewBox="0 0 18 22" fill="none" stroke="#8a8a8a" stroke-width="1.4">
<circle cx="4.5" cy="5" r="2.6"/><circle cx="4.5" cy="18" r="2.6"/><circle cx="13" cy="8.5" r="2.6"/><path d="M4.5 7.6v7.8"/><path d="M13 11.1v.6q0 1.9-1.9 1.9H6.4q-1.9 0-1.9 1.9"/></svg><svg style="position:absolute;left:8px;top:159px" width="22" height="22" viewBox="0 0 22 22" fill="none" stroke="#8a8a8a" stroke-width="1.4" stroke-linejoin="round">
<path d="M7.5 10V1.5L20 9.5 12 14.8"/><path d="M3 14.8a2.5 2.5 0 0 1 5 0"/><ellipse cx="5.5" cy="17.3" rx="2.9" ry="3"/><path d="M.8 15.6h1.8M8.4 15.6h1.8M.8 18.8h1.8M8.4 18.8h1.8"/></svg><svg style="position:absolute;left:9px;top:203px" width="21" height="20" viewBox="0 0 21 20" fill="none" stroke="#8a8a8a" stroke-width="1.4" stroke-linejoin="round">
<path d="M1.2 3.8H8.3V11.2H15.6V18.4H1.2Z"/><path d="M1.2 11.2H8.3V18.4"/><rect x="11.4" y="0.9" width="8" height="7.4" rx="1.2"/></svg><svg style="position:absolute;left:9px;top:247px" width="21" height="17" viewBox="0 0 21 17">
<path d="M8.5 2H11.1L6.8 13.6H0Z" fill="#8a8a8a"/><path d="M10.6 2.8 19.1 14.8H5.5L13.1 13 8.5 8Z" fill="#8a8a8a"/></svg><svg style="position:absolute;left:8px;top:503px" width="22" height="22" viewBox="0 0 22 22" fill="none" stroke="#8a8a8a" stroke-width="1.5">
<circle cx="11" cy="11" r="9.5"/><circle cx="10.8" cy="9.5" r="3.9"/><path d="M4.5 17.8c1.5-3 4-4.5 6.5-4.5s5 1.5 6.5 4.5"/></svg><svg style="position:absolute;left:7px;top:545px" width="23" height="23" viewBox="0 0 23 23" fill="none" stroke="#8a8a8a" stroke-width="1.5" stroke-linejoin="round">
<path d="M9.91 4.39 L9.92 1.53 L13.08 1.53 L13.09 4.39 L15.05 5.20 L17.08 3.19 L19.31 5.42 L17.30 7.45 L18.11 9.41 L20.97 9.42 L20.97 12.58 L18.11 12.59 L17.30 14.55 L19.31 16.58 L17.08 18.81 L15.05 16.80 L13.09 17.61 L13.08 20.47 L9.92 20.47 L9.91 17.61 L7.95 16.80 L5.92 18.81 L3.69 16.58 L5.70 14.55 L4.89 12.59 L2.03 12.58 L2.03 9.42 L4.89 9.41 L5.70 7.45 L3.69 5.42 L5.92 3.19 L7.95 5.20Z"/><circle cx="11.5" cy="11" r="2.4"/></svg>
<div class="tabs"></div>
<div class="tab"></div>
<svg style="position:absolute;left:49.5px;top:32.5px" width="10" height="10" viewBox="0 0 10 10">
<path d="M6.9 2.6A3.3 3.3 0 1 0 6.9 7.2" fill="none" stroke="#4f97b8" stroke-width="2.1"/><path d="M7.2 3.3h2.2M7.2 4.8h2.2M7.9 2.6v2.9M8.8 2.6v2.9" stroke="#4f97b8" stroke-width=".7"/></svg>
<div class="t" style="left:64.55px;top:31.55px;font-size:11.2px;line-height:14px;color:#ffffff;transform:scaleX(0.8970);">Vehicles Screen.pa.yaml</div>
<svg style="position:absolute;left:180px;top:34.3px" width="9" height="8" viewBox="0 0 9 8"><path d="M1 .8l7 6.6M8 .8l-7 6.6" stroke="#d0d0d0" stroke-width="1.35"/></svg>
<svg style="position:absolute;left:457px;top:32px" width="12" height="12" viewBox="0 0 12 12" fill="none" stroke="#c5c5c5" stroke-width="1.1"><rect x=".55" y=".55" width="10.2" height="10.2" rx=".6"/><path d="M5.65 .6v10.2" stroke-width="1.3"/></svg>
<svg style="position:absolute;left:482px;top:36.5px" width="14" height="4" viewBox="0 0 14 4" fill="#c5c5c5"><circle cx="2" cy="2" r="1"/><circle cx="6.5" cy="2" r="1"/><circle cx="11" cy="2" r="1"/></svg>
<div class="shadow"></div>
<svg style="position:absolute;left:80.5px;top:55.5px" width="10" height="10" viewBox="0 0 10 10">
<path d="M6.9 2.6A3.3 3.3 0 1 0 6.9 7.2" fill="none" stroke="#4f97b8" stroke-width="2.1"/><path d="M7.2 3.3h2.2M7.2 4.8h2.2M7.9 2.6v2.9M8.8 2.6v2.9" stroke="#4f97b8" stroke-width=".7"/></svg>
<div class="t" style="left:51.27px;top:54.35px;font-size:11.2px;line-height:14px;color:#a9a9a9;transform:scaleX(0.8554);">Src</div>
<svg style="position:absolute;left:69px;top:56px" width="6" height="10" viewBox="0 0 6 10"><path d="M1 1l4 4-4 4" fill="none" stroke="#a9a9a9" stroke-width="1.1"/></svg>
<div class="t" style="left:96.35px;top:54.35px;font-size:11.2px;line-height:14px;color:#a9a9a9;transform:scaleX(0.8978);">Vehicles Screen.pa.yaml</div>
<div class="bshadow"></div>
<div class="curline" style="top:347.56px"></div>
<div class="guide" style="left:93.60px;top:69.10px;height:15.77px;background:#404040"></div>
<div class="guide" style="left:118.69px;top:69.10px;height:15.77px;background:#404040"></div>
<div class="guide" style="left:93.60px;top:84.57px;height:15.77px;background:#404040"></div>
<div class="guide" style="left:118.69px;top:84.57px;height:15.77px;background:#404040"></div>
<div class="guide" style="left:93.60px;top:100.04px;height:15.77px;background:#404040"></div>
<div class="guide" style="left:118.69px;top:100.04px;height:15.77px;background:#404040"></div>
<div class="guide" style="left:93.60px;top:115.51px;height:15.77px;background:#404040"></div>
<div class="guide" style="left:118.69px;top:115.51px;height:15.77px;background:#404040"></div>
<div class="guide" style="left:93.60px;top:130.98px;height:15.77px;background:#404040"></div>
<div class="guide" style="left:118.69px;top:130.98px;height:15.77px;background:#404040"></div>
<div class="guide" style="left:93.60px;top:146.45px;height:15.77px;background:#404040"></div>
<div class="guide" style="left:118.69px;top:146.45px;height:15.77px;background:#404040"></div>
<div class="guide" style="left:93.60px;top:161.92px;height:15.77px;background:#404040"></div>
<div class="guide" style="left:118.69px;top:161.92px;height:15.77px;background:#404040"></div>
<div class="guide" style="left:93.60px;top:177.39px;height:15.77px;background:#404040"></div>
<div class="guide" style="left:118.69px;top:177.39px;height:15.77px;background:#404040"></div>
<div class="guide" style="left:93.60px;top:192.86px;height:15.77px;background:#404040"></div>
<div class="guide" style="left:118.69px;top:192.86px;height:15.77px;background:#404040"></div>
<div class="guide" style="left:93.60px;top:208.33px;height:15.77px;background:#404040"></div>
<div class="guide" style="left:118.69px;top:208.33px;height:15.77px;background:#404040"></div>
<div class="guide" style="left:143.78px;top:208.33px;height:15.77px;background:#707070"></div>
<div class="guide" style="left:93.60px;top:223.80px;height:15.77px;background:#404040"></div>
<div class="guide" style="left:118.69px;top:223.80px;height:15.77px;background:#404040"></div>
<div class="guide" style="left:143.78px;top:223.80px;height:15.77px;background:#707070"></div>
<div class="guide" style="left:93.60px;top:239.27px;height:15.77px;background:#404040"></div>
<div class="guide" style="left:118.69px;top:239.27px;height:15.77px;background:#404040"></div>
<div class="guide" style="left:143.78px;top:239.27px;height:15.77px;background:#707070"></div>
<div class="guide" style="left:93.60px;top:254.74px;height:15.77px;background:#404040"></div>
<div class="guide" style="left:118.69px;top:254.74px;height:15.77px;background:#404040"></div>
<div class="guide" style="left:143.78px;top:254.74px;height:15.77px;background:#707070"></div>
<div class="guide" style="left:93.60px;top:270.21px;height:15.77px;background:#404040"></div>
<div class="guide" style="left:118.69px;top:270.21px;height:15.77px;background:#404040"></div>
<div class="guide" style="left:143.78px;top:270.21px;height:15.77px;background:#707070"></div>
<div class="guide" style="left:93.60px;top:285.68px;height:15.77px;background:#404040"></div>
<div class="guide" style="left:118.69px;top:285.68px;height:15.77px;background:#404040"></div>
<div class="guide" style="left:143.78px;top:285.68px;height:15.77px;background:#707070"></div>
<div class="guide" style="left:93.60px;top:301.15px;height:15.77px;background:#404040"></div>
<div class="guide" style="left:118.69px;top:301.15px;height:15.77px;background:#404040"></div>
<div class="guide" style="left:143.78px;top:301.15px;height:15.77px;background:#707070"></div>
<div class="guide" style="left:93.60px;top:316.62px;height:15.77px;background:#404040"></div>
<div class="guide" style="left:118.69px;top:316.62px;height:15.77px;background:#404040"></div>
<div class="guide" style="left:143.78px;top:316.62px;height:15.77px;background:#707070"></div>
<div class="guide" style="left:93.60px;top:332.09px;height:15.77px;background:#404040"></div>
<div class="guide" style="left:118.69px;top:332.09px;height:15.77px;background:#404040"></div>
<div class="guide" style="left:143.78px;top:332.09px;height:15.77px;background:#707070"></div>
<div class="guide" style="left:93.60px;top:347.56px;height:15.77px;background:#404040"></div>
<div class="guide" style="left:118.69px;top:347.56px;height:15.77px;background:#404040"></div>
<div class="guide" style="left:143.78px;top:347.56px;height:15.77px;background:#707070"></div>
<div class="guide" style="left:93.60px;top:363.03px;height:15.77px;background:#404040"></div>
<div class="guide" style="left:118.69px;top:363.03px;height:15.77px;background:#404040"></div>
<div class="guide" style="left:143.78px;top:363.03px;height:15.77px;background:#707070"></div>
<div class="guide" style="left:93.60px;top:378.50px;height:15.77px;background:#404040"></div>
<div class="guide" style="left:118.69px;top:378.50px;height:15.77px;background:#404040"></div>
<div class="guide" style="left:143.78px;top:378.50px;height:15.77px;background:#707070"></div>
<div class="guide" style="left:168.86px;top:378.50px;height:15.77px;background:#404040"></div>
<div class="guide" style="left:93.60px;top:393.97px;height:15.77px;background:#404040"></div>
<div class="guide" style="left:118.69px;top:393.97px;height:15.77px;background:#404040"></div>
<div class="guide" style="left:143.78px;top:393.97px;height:15.77px;background:#707070"></div>
<div class="guide" style="left:168.86px;top:393.97px;height:15.77px;background:#404040"></div>
<div class="guide" style="left:93.60px;top:409.44px;height:15.77px;background:#404040"></div>
<div class="guide" style="left:118.69px;top:409.44px;height:15.77px;background:#404040"></div>
<div class="guide" style="left:143.78px;top:409.44px;height:15.77px;background:#707070"></div>
<div class="guide" style="left:168.86px;top:409.44px;height:15.77px;background:#404040"></div>
<div class="guide" style="left:93.60px;top:424.91px;height:15.77px;background:#404040"></div>
<div class="guide" style="left:118.69px;top:424.91px;height:15.77px;background:#404040"></div>
<div class="guide" style="left:143.78px;top:424.91px;height:15.77px;background:#707070"></div>
<div class="guide" style="left:168.86px;top:424.91px;height:15.77px;background:#404040"></div>
<div class="guide" style="left:93.60px;top:440.38px;height:15.77px;background:#404040"></div>
<div class="guide" style="left:118.69px;top:440.38px;height:15.77px;background:#404040"></div>
<div class="guide" style="left:143.78px;top:440.38px;height:15.77px;background:#707070"></div>
<div class="guide" style="left:168.86px;top:440.38px;height:15.77px;background:#404040"></div>
<div class="guide" style="left:93.60px;top:455.85px;height:15.77px;background:#404040"></div>
<div class="guide" style="left:118.69px;top:455.85px;height:15.77px;background:#404040"></div>
<div class="guide" style="left:143.78px;top:455.85px;height:15.77px;background:#707070"></div>
<div class="guide" style="left:168.86px;top:455.85px;height:15.77px;background:#404040"></div>
<div class="guide" style="left:93.60px;top:471.32px;height:15.77px;background:#404040"></div>
<div class="guide" style="left:118.69px;top:471.32px;height:15.77px;background:#404040"></div>
<div class="guide" style="left:143.78px;top:471.32px;height:15.77px;background:#707070"></div>
<div class="guide" style="left:168.86px;top:471.32px;height:15.77px;background:#404040"></div>
<div class="guide" style="left:93.60px;top:486.79px;height:15.77px;background:#404040"></div>
<div class="guide" style="left:118.69px;top:486.79px;height:15.77px;background:#404040"></div>
<div class="guide" style="left:143.78px;top:486.79px;height:15.77px;background:#707070"></div>
<div class="guide" style="left:168.86px;top:486.79px;height:15.77px;background:#404040"></div>
<div class="guide" style="left:93.60px;top:502.26px;height:15.77px;background:#404040"></div>
<div class="guide" style="left:118.69px;top:502.26px;height:15.77px;background:#404040"></div>
<div class="guide" style="left:143.78px;top:502.26px;height:15.77px;background:#707070"></div>
<div class="guide" style="left:93.60px;top:517.73px;height:15.77px;background:#404040"></div>
<div class="guide" style="left:118.69px;top:517.73px;height:15.77px;background:#404040"></div>
<div class="guide" style="left:143.78px;top:517.73px;height:15.77px;background:#707070"></div>
<div class="guide" style="left:93.60px;top:533.20px;height:15.77px;background:#404040"></div>
<div class="guide" style="left:118.69px;top:533.20px;height:15.77px;background:#404040"></div>
<div class="guide" style="left:143.78px;top:533.20px;height:15.77px;background:#707070"></div>
<div class="guide" style="left:168.86px;top:533.20px;height:15.77px;background:#404040"></div>
<div class="guide" style="left:93.60px;top:548.67px;height:15.77px;background:#404040"></div>
<div class="guide" style="left:118.69px;top:548.67px;height:15.77px;background:#404040"></div>
<div class="guide" style="left:143.78px;top:548.67px;height:15.77px;background:#707070"></div>
<div class="guide" style="left:168.86px;top:548.67px;height:15.77px;background:#404040"></div>
<div class="guide" style="left:93.60px;top:564.14px;height:15.77px;background:#404040"></div>
<div class="guide" style="left:118.69px;top:564.14px;height:15.77px;background:#404040"></div>
<div class="guide" style="left:143.78px;top:564.14px;height:15.77px;background:#707070"></div>
<div class="guide" style="left:168.86px;top:564.14px;height:15.77px;background:#404040"></div>
<div style="position:absolute;left:93.6px;top:347.06px;width:1.6px;height:15.67px;background:#c8c8c8"></div>
<div class="ln" style="top:69.40px;color:#858585">31</div>
<div class="ln" style="top:84.87px;color:#858585">32</div>
<div class="ln" style="top:100.34px;color:#858585">33</div>
<div class="ln" style="top:115.81px;color:#858585">34</div>
<div class="ln" style="top:131.28px;color:#858585">35</div>
<div class="ln" style="top:146.75px;color:#858585">36</div>
<div class="ln" style="top:162.22px;color:#858585">37</div>
<div class="ln" style="top:177.69px;color:#858585">38</div>
<div class="ln" style="top:193.16px;color:#858585">39</div>
<div class="ln" style="top:208.63px;color:#858585">40</div>
<div class="ln" style="top:224.10px;color:#858585">41</div>
<div class="ln" style="top:239.57px;color:#858585">42</div>
<div class="ln" style="top:255.04px;color:#858585">43</div>
<div class="ln" style="top:270.51px;color:#858585">44</div>
<div class="ln" style="top:285.98px;color:#858585">45</div>
<div class="ln" style="top:301.45px;color:#858585">46</div>
<div class="ln" style="top:316.92px;color:#858585">47</div>
<div class="ln" style="top:332.39px;color:#858585">48</div>
<div class="ln" style="top:347.86px;color:#c6c6c6">49</div>
<div class="ln" style="top:363.33px;color:#858585">50</div>
<div class="ln" style="top:378.80px;color:#858585">51</div>
<div class="ln" style="top:394.27px;color:#858585">52</div>
<div class="ln" style="top:409.74px;color:#858585">53</div>
<div class="ln" style="top:425.21px;color:#858585">54</div>
<div class="ln" style="top:440.68px;color:#858585">55</div>
<div class="ln" style="top:456.15px;color:#858585">56</div>
<div class="ln" style="top:471.62px;color:#858585">57</div>
<div class="ln" style="top:487.09px;color:#858585">58</div>
<div class="ln" style="top:502.56px;color:#858585">59</div>
<div class="ln" style="top:518.03px;color:#858585">60</div>
<div class="ln" style="top:533.50px;color:#858585">61</div>
<div class="ln" style="top:548.97px;color:#858585">62</div>
<div class="ln" style="top:564.44px;color:#858585">63</div>
<div class="code" style="top:69.39999999999999px;left:93.3px">        <span style="color:#d4d4d4">Height</span><span style="color:#d4d4d4">: </span><span style="color:#d4d4d4">=</span><span style="color:#b5cea8">708</span><br>        <span style="color:#d4d4d4">Width</span><span style="color:#d4d4d4">: </span><span style="color:#d4d4d4">=</span><span style="color:#b5cea8">1286</span><br>        <span style="color:#d4d4d4">Y</span><span style="color:#d4d4d4">: </span><span style="color:#d4d4d4">=</span><span style="color:#b5cea8">60</span><br>        <span style="color:#d4d4d4">X</span><span style="color:#d4d4d4">: </span><span style="color:#d4d4d4">=</span><span style="color:#b5cea8">80</span><br>        <span style="color:#d4d4d4">Fill</span><span style="color:#d4d4d4">: </span><span style="color:#d4d4d4">=</span><span style="color:#dcdcaa">RGBA</span><span style="color:#d4d4d4">(</span><span style="color:#b5cea8">0</span><span style="color:#d4d4d4">,</span><span style="color:#d4d4d4"> </span><span style="color:#b5cea8">0</span><span style="color:#d4d4d4">,</span><span style="color:#d4d4d4"> </span><span style="color:#b5cea8">0</span><span style="color:#d4d4d4">,</span><span style="color:#d4d4d4"> </span><span style="color:#b5cea8">0</span><span style="color:#d4d4d4">)</span><br>        <span style="color:#d4d4d4">BorderStyle</span><span style="color:#d4d4d4">: </span><span style="color:#d4d4d4">=</span><span style="color:#9cdcfe">BorderStyle</span><span style="color:#d4d4d4">.</span><span style="color:#9cdcfe">Solid</span><br>        <span style="color:#d4d4d4">BorderColor</span><span style="color:#d4d4d4">: </span><span style="color:#d4d4d4">=</span><span style="color:#dcdcaa">RGBA</span><span style="color:#d4d4d4">(</span><span style="color:#b5cea8">0</span><span style="color:#d4d4d4">,</span><span style="color:#d4d4d4"> </span><span style="color:#b5cea8">0</span><span style="color:#d4d4d4">,</span><span style="color:#d4d4d4"> </span><span style="color:#b5cea8">0</span><span style="color:#d4d4d4">,</span><span style="color:#d4d4d4"> </span><span style="color:#b5cea8">1</span><span style="color:#d4d4d4">)</span><br>&nbsp;<br>        <span style="color:#9cdcfe">gal_Vehicles_List As gallery.galleryVertical</span><span style="color:#d4d4d4">:</span><br>            <span style="color:#d4d4d4">Items</span><span style="color:#d4d4d4">: </span><span style="color:#d4d4d4">=</span><span style="color:#ce9178">'Company Vehicles'</span><br>            <span style="color:#d4d4d4">Fill</span><span style="color:#d4d4d4">: </span><span style="color:#d4d4d4">=</span><span style="color:#dcdcaa">RGBA</span><span style="color:#d4d4d4">(</span><span style="color:#b5cea8">255</span><span style="color:#d4d4d4">,</span><span style="color:#d4d4d4"> </span><span style="color:#b5cea8">255</span><span style="color:#d4d4d4">,</span><span style="color:#d4d4d4"> </span><span style="color:#b5cea8">255</span><span style="color:#d4d4d4">,</span><span style="color:#d4d4d4"> </span><span style="color:#b5cea8">1</span><span style="color:#d4d4d4">)</span><br>            <span style="color:#d4d4d4">TemplateSize</span><span style="color:#d4d4d4">: </span><span style="color:#d4d4d4">=</span><span style="color:#b5cea8">63</span><br>            <span style="color:#d4d4d4">ZIndex</span><span style="color:#d4d4d4">: </span><span style="color:#d4d4d4">=</span><span style="color:#b5cea8">1</span><br>            <span style="color:#d4d4d4">Layout</span><span style="color:#d4d4d4">: </span><span style="color:#d4d4d4">=</span><span style="color:#9cdcfe">Layout</span><span style="color:#d4d4d4">.</span><span style="color:#9cdcfe">Vertical</span><br>            <span style="color:#d4d4d4">Height</span><span style="color:#d4d4d4">: </span><span style="color:#d4d4d4">=</span><span style="color:#b5cea8">623</span><br>            <span style="color:#d4d4d4">Width</span><span style="color:#d4d4d4">: </span><span style="color:#d4d4d4">=</span><span style="color:#b5cea8">1211</span><br>            <span style="color:#d4d4d4">Y</span><span style="color:#d4d4d4">: </span><span style="color:#d4d4d4">=</span><span style="color:#b5cea8">85</span><br>            <span style="color:#d4d4d4">X</span><span style="color:#d4d4d4">: </span><span style="color:#d4d4d4">=</span><span style="color:#b5cea8">40</span><br>&nbsp;<br>            <span style="color:#9cdcfe">lbl_Vehicles_List__Office As </span><span style="color:#d4d4d4">label</span><span style="color:#d4d4d4">:</span><br>                <span style="color:#d4d4d4">Text</span><span style="color:#d4d4d4">: </span><span style="color:#d4d4d4">=</span><span style="color:#9cdcfe">ThisItem</span><span style="color:#d4d4d4">.</span><span style="color:#9cdcfe">Office</span><br>                <span style="color:#d4d4d4">Size</span><span style="color:#d4d4d4">: </span><span style="color:#d4d4d4">=</span><span style="color:#b5cea8">16</span><br>                <span style="color:#d4d4d4">ZIndex</span><span style="color:#d4d4d4">: </span><span style="color:#d4d4d4">=</span><span style="color:#b5cea8">1</span><br>                <span style="color:#d4d4d4">Height</span><span style="color:#d4d4d4">: </span><span style="color:#d4d4d4">=</span><span style="color:#b5cea8">58</span><br>                <span style="color:#d4d4d4">Width</span><span style="color:#d4d4d4">: </span><span style="color:#d4d4d4">=</span><span style="color:#b5cea8">297</span><br>                <span style="color:#d4d4d4">X</span><span style="color:#d4d4d4">: </span><span style="color:#d4d4d4">=</span><span style="color:#b5cea8">531</span><br>                <span style="color:#d4d4d4">Font</span><span style="color:#d4d4d4">: </span><span style="color:#d4d4d4">=</span><span style="color:#9cdcfe">Font</span><span style="color:#d4d4d4">.</span><span style="color:#ce9178">'Segoe UI'</span><br>                <span style="color:#d4d4d4">OnSelect</span><span style="color:#d4d4d4">: </span><span style="color:#d4d4d4">=</span><span style="color:#dcdcaa">Select</span><span style="color:#d4d4d4">(</span><span style="color:#9cdcfe">Parent</span><span style="color:#d4d4d4">)</span><br>&nbsp;<br>            <span style="color:#9cdcfe">lbl_Vehicles_List__AssetID As </span><span style="color:#d4d4d4">label</span><span style="color:#d4d4d4">:</span><br>                <span style="color:#d4d4d4">Text</span><span style="color:#d4d4d4">: </span><span style="color:#d4d4d4">=</span><span style="color:#9cdcfe">ThisItem</span><span style="color:#d4d4d4">.</span><span style="color:#9cdcfe">AssetCode</span><br>                <span style="color:#d4d4d4">Font</span><span style="color:#d4d4d4">: </span><span style="color:#d4d4d4">=</span><span style="color:#9cdcfe">Font</span><span style="color:#d4d4d4">.</span><span style="color:#ce9178">'Segoe UI'</span><br>                <span style="color:#d4d4d4">X</span><span style="color:#d4d4d4">: </span><span style="color:#d4d4d4">=</span><span style="color:#b5cea8">343</span></div>
<div class="mmwrap"><div class="mm" style="left:452.00px;top:70.00px;width:22.68px;background:#9cdcfe"></div>
<div class="mm" style="left:455.24px;top:73.24px;width:20.25px;background:#9cdcfe"></div>
<div class="mm" style="left:458.48px;top:74.86px;width:3.24px;background:#d4d4d4"></div>
<div class="mm" style="left:463.34px;top:74.86px;width:0.81px;background:#d4d4d4"></div>
<div class="mm" style="left:464.15px;top:74.86px;width:3.24px;background:#9cdcfe"></div>
<div class="mm" style="left:467.39px;top:74.86px;width:0.81px;background:#d4d4d4"></div>
<div class="mm" style="left:468.20px;top:74.86px;width:0.81px;background:#b5cea8"></div>
<div class="mm" style="left:469.01px;top:74.86px;width:0.81px;background:#d4d4d4"></div>
<div class="mm" style="left:470.63px;top:74.86px;width:2.43px;background:#b5cea8"></div>
<div class="mm" style="left:473.06px;top:74.86px;width:0.81px;background:#d4d4d4"></div>
<div class="mm" style="left:474.68px;top:74.86px;width:2.43px;background:#b5cea8"></div>
<div class="mm" style="left:477.11px;top:74.86px;width:0.81px;background:#d4d4d4"></div>
<div class="mm" style="left:478.73px;top:74.86px;width:0.81px;background:#b5cea8"></div>
<div class="mm" style="left:479.54px;top:74.86px;width:0.81px;background:#d4d4d4"></div>
<div class="mm" style="left:458.48px;top:76.48px;width:4.86px;background:#d4d4d4"></div>
<div class="mm" style="left:464.96px;top:76.48px;width:0.81px;background:#d4d4d4"></div>
<div class="mm" style="left:465.77px;top:76.48px;width:1.62px;background:#b5cea8"></div>
<div class="mm" style="left:458.48px;top:78.10px;width:4.05px;background:#d4d4d4"></div>
<div class="mm" style="left:464.15px;top:78.10px;width:0.81px;background:#d4d4d4"></div>
<div class="mm" style="left:464.96px;top:78.10px;width:3.24px;background:#b5cea8"></div>
<div class="mm" style="left:458.48px;top:79.72px;width:4.86px;background:#d4d4d4"></div>
<div class="mm" style="left:464.96px;top:79.72px;width:0.81px;background:#d4d4d4"></div>
<div class="mm" style="left:465.77px;top:79.72px;width:0.81px;background:#b5cea8"></div>
<div class="mm" style="left:455.24px;top:82.96px;width:15.39px;background:#9cdcfe"></div>
<div class="mm" style="left:458.48px;top:84.58px;width:3.24px;background:#d4d4d4"></div>
<div class="mm" style="left:463.34px;top:84.58px;width:0.81px;background:#d4d4d4"></div>
<div class="mm" style="left:464.15px;top:84.58px;width:14.58px;background:#ce9178"></div>
<div class="mm" style="left:458.48px;top:86.20px;width:4.05px;background:#d4d4d4"></div>
<div class="mm" style="left:464.15px;top:86.20px;width:0.81px;background:#d4d4d4"></div>
<div class="mm" style="left:464.96px;top:86.20px;width:3.24px;background:#9cdcfe"></div>
<div class="mm" style="left:468.20px;top:86.20px;width:0.81px;background:#d4d4d4"></div>
<div class="mm" style="left:469.01px;top:86.20px;width:2.43px;background:#b5cea8"></div>
<div class="mm" style="left:471.44px;top:86.20px;width:0.81px;background:#d4d4d4"></div>
<div class="mm" style="left:473.06px;top:86.20px;width:2.43px;background:#b5cea8"></div>
<div class="mm" style="left:475.49px;top:86.20px;width:0.81px;background:#d4d4d4"></div>
<div class="mm" style="left:477.11px;top:86.20px;width:2.43px;background:#b5cea8"></div>
<div class="mm" style="left:479.54px;top:86.20px;width:0.81px;background:#d4d4d4"></div>
<div class="mm" style="left:481.16px;top:86.20px;width:0.81px;background:#b5cea8"></div>
<div class="mm" style="left:481.97px;top:86.20px;width:0.81px;background:#d4d4d4"></div>
<div class="mm" style="left:458.48px;top:87.82px;width:3.24px;background:#d4d4d4"></div>
<div class="mm" style="left:463.34px;top:87.82px;width:0.81px;background:#d4d4d4"></div>
<div class="mm" style="left:464.15px;top:87.82px;width:1.62px;background:#b5cea8"></div>
<div class="mm" style="left:458.48px;top:89.44px;width:8.10px;background:#d4d4d4"></div>
<div class="mm" style="left:468.20px;top:89.44px;width:0.81px;background:#d4d4d4"></div>
<div class="mm" style="left:469.01px;top:89.44px;width:15.39px;background:#9cdcfe"></div>
<div class="mm" style="left:458.48px;top:91.06px;width:4.86px;background:#d4d4d4"></div>
<div class="mm" style="left:464.96px;top:91.06px;width:0.81px;background:#d4d4d4"></div>
<div class="mm" style="left:465.77px;top:91.06px;width:1.62px;background:#b5cea8"></div>
<div class="mm" style="left:458.48px;top:92.68px;width:4.05px;background:#d4d4d4"></div>
<div class="mm" style="left:464.15px;top:92.68px;width:0.81px;background:#d4d4d4"></div>
<div class="mm" style="left:464.96px;top:92.68px;width:2.43px;background:#b5cea8"></div>
<div class="mm" style="left:458.48px;top:94.30px;width:0.81px;background:#d4d4d4"></div>
<div class="mm" style="left:460.91px;top:94.30px;width:0.81px;background:#d4d4d4"></div>
<div class="mm" style="left:461.72px;top:94.30px;width:1.62px;background:#b5cea8"></div>
<div class="mm" style="left:458.48px;top:95.92px;width:4.86px;background:#d4d4d4"></div>
<div class="mm" style="left:464.96px;top:95.92px;width:0.81px;background:#d4d4d4"></div>
<div class="mm" style="left:465.77px;top:95.92px;width:0.81px;background:#b5cea8"></div>
<div class="mm" style="left:455.24px;top:99.16px;width:16.20px;background:#9cdcfe"></div>
<div class="mm" style="left:458.48px;top:100.78px;width:3.24px;background:#d4d4d4"></div>
<div class="mm" style="left:463.34px;top:100.78px;width:0.81px;background:#d4d4d4"></div>
<div class="mm" style="left:464.15px;top:100.78px;width:6.48px;background:#9cdcfe"></div>
<div class="mm" style="left:458.48px;top:102.40px;width:6.48px;background:#d4d4d4"></div>
<div class="mm" style="left:466.58px;top:102.40px;width:0.81px;background:#d4d4d4"></div>
<div class="mm" style="left:467.39px;top:102.40px;width:5.67px;background:#9cdcfe"></div>
<div class="mm" style="left:473.06px;top:102.40px;width:0.81px;background:#d4d4d4"></div>
<div class="mm" style="left:473.87px;top:102.40px;width:8.91px;background:#9cdcfe"></div>
<div class="mm" style="left:482.78px;top:102.40px;width:0.81px;background:#d4d4d4"></div>
<div class="mm" style="left:483.59px;top:102.40px;width:0.81px;background:#d4d4d4"></div>
<div class="mm" style="left:485.21px;top:102.40px;width:6.48px;background:#9cdcfe"></div>
<div class="mm" style="left:491.69px;top:102.40px;width:0.81px;background:#d4d4d4"></div>
<div class="mm" style="left:492.50px;top:102.40px;width:5.50px;background:#ce9178"></div>
<div class="mm" style="left:458.48px;top:104.02px;width:4.05px;background:#d4d4d4"></div>
<div class="mm" style="left:464.15px;top:104.02px;width:0.81px;background:#d4d4d4"></div>
<div class="mm" style="left:464.96px;top:104.02px;width:3.24px;background:#9cdcfe"></div>
<div class="mm" style="left:468.20px;top:104.02px;width:0.81px;background:#d4d4d4"></div>
<div class="mm" style="left:469.01px;top:104.02px;width:2.43px;background:#b5cea8"></div>
<div class="mm" style="left:471.44px;top:104.02px;width:0.81px;background:#d4d4d4"></div>
<div class="mm" style="left:473.06px;top:104.02px;width:2.43px;background:#b5cea8"></div>
<div class="mm" style="left:475.49px;top:104.02px;width:0.81px;background:#d4d4d4"></div>
<div class="mm" style="left:477.11px;top:104.02px;width:2.43px;background:#b5cea8"></div>
<div class="mm" style="left:479.54px;top:104.02px;width:0.81px;background:#d4d4d4"></div>
<div class="mm" style="left:481.16px;top:104.02px;width:0.81px;background:#b5cea8"></div>
<div class="mm" style="left:481.97px;top:104.02px;width:0.81px;background:#d4d4d4"></div>
<div class="mm" style="left:458.48px;top:105.64px;width:4.86px;background:#d4d4d4"></div>
<div class="mm" style="left:464.96px;top:105.64px;width:0.81px;background:#d4d4d4"></div>
<div class="mm" style="left:465.77px;top:105.64px;width:1.62px;background:#b5cea8"></div>
<div class="mm" style="left:458.48px;top:107.26px;width:4.05px;background:#d4d4d4"></div>
<div class="mm" style="left:464.15px;top:107.26px;width:0.81px;background:#d4d4d4"></div>
<div class="mm" style="left:464.96px;top:107.26px;width:1.62px;background:#b5cea8"></div>
<div class="mm" style="left:458.48px;top:108.88px;width:0.81px;background:#d4d4d4"></div>
<div class="mm" style="left:460.91px;top:108.88px;width:0.81px;background:#d4d4d4"></div>
<div class="mm" style="left:461.72px;top:108.88px;width:3.24px;background:#b5cea8"></div>
<div class="mm" style="left:458.48px;top:110.50px;width:4.86px;background:#d4d4d4"></div>
<div class="mm" style="left:464.96px;top:110.50px;width:0.81px;background:#d4d4d4"></div>
<div class="mm" style="left:465.77px;top:110.50px;width:0.81px;background:#b5cea8"></div>
<div class="mm" style="left:455.24px;top:113.74px;width:23.49px;background:#9cdcfe"></div>
<div class="mm" style="left:458.48px;top:115.36px;width:3.24px;background:#d4d4d4"></div>
<div class="mm" style="left:463.34px;top:115.36px;width:0.81px;background:#d4d4d4"></div>
<div class="mm" style="left:464.15px;top:115.36px;width:3.24px;background:#9cdcfe"></div>
<div class="mm" style="left:467.39px;top:115.36px;width:0.81px;background:#d4d4d4"></div>
<div class="mm" style="left:468.20px;top:115.36px;width:2.43px;background:#b5cea8"></div>
<div class="mm" style="left:470.63px;top:115.36px;width:0.81px;background:#d4d4d4"></div>
<div class="mm" style="left:472.25px;top:115.36px;width:2.43px;background:#b5cea8"></div>
<div class="mm" style="left:474.68px;top:115.36px;width:0.81px;background:#d4d4d4"></div>
<div class="mm" style="left:476.30px;top:115.36px;width:2.43px;background:#b5cea8"></div>
<div class="mm" style="left:478.73px;top:115.36px;width:0.81px;background:#d4d4d4"></div>
<div class="mm" style="left:480.35px;top:115.36px;width:0.81px;background:#b5cea8"></div>
<div class="mm" style="left:481.16px;top:115.36px;width:0.81px;background:#d4d4d4"></div>
<div class="mm" style="left:458.48px;top:116.98px;width:4.86px;background:#d4d4d4"></div>
<div class="mm" style="left:464.96px;top:116.98px;width:0.81px;background:#d4d4d4"></div>
<div class="mm" style="left:465.77px;top:116.98px;width:0.81px;background:#b5cea8"></div>
<div class="mm" style="left:458.48px;top:118.60px;width:4.86px;background:#d4d4d4"></div>
<div class="mm" style="left:464.96px;top:118.60px;width:0.81px;background:#d4d4d4"></div>
<div class="mm" style="left:465.77px;top:118.60px;width:2.43px;background:#b5cea8"></div>
<div class="mm" style="left:458.48px;top:120.22px;width:4.05px;background:#d4d4d4"></div>
<div class="mm" style="left:464.15px;top:120.22px;width:0.81px;background:#d4d4d4"></div>
<div class="mm" style="left:464.96px;top:120.22px;width:3.24px;background:#b5cea8"></div>
<div class="mm" style="left:458.48px;top:121.84px;width:0.81px;background:#d4d4d4"></div>
<div class="mm" style="left:460.91px;top:121.84px;width:0.81px;background:#d4d4d4"></div>
<div class="mm" style="left:461.72px;top:121.84px;width:1.62px;background:#b5cea8"></div>
<div class="mm" style="left:458.48px;top:123.46px;width:0.81px;background:#d4d4d4"></div>
<div class="mm" style="left:460.91px;top:123.46px;width:0.81px;background:#d4d4d4"></div>
<div class="mm" style="left:461.72px;top:123.46px;width:1.62px;background:#b5cea8"></div>
<div class="mm" style="left:458.48px;top:125.08px;width:3.24px;background:#d4d4d4"></div>
<div class="mm" style="left:463.34px;top:125.08px;width:0.81px;background:#d4d4d4"></div>
<div class="mm" style="left:464.15px;top:125.08px;width:3.24px;background:#9cdcfe"></div>
<div class="mm" style="left:467.39px;top:125.08px;width:0.81px;background:#d4d4d4"></div>
<div class="mm" style="left:468.20px;top:125.08px;width:0.81px;background:#b5cea8"></div>
<div class="mm" style="left:469.01px;top:125.08px;width:0.81px;background:#d4d4d4"></div>
<div class="mm" style="left:470.63px;top:125.08px;width:0.81px;background:#b5cea8"></div>
<div class="mm" style="left:471.44px;top:125.08px;width:0.81px;background:#d4d4d4"></div>
<div class="mm" style="left:473.06px;top:125.08px;width:0.81px;background:#b5cea8"></div>
<div class="mm" style="left:473.87px;top:125.08px;width:0.81px;background:#d4d4d4"></div>
<div class="mm" style="left:475.49px;top:125.08px;width:0.81px;background:#b5cea8"></div>
<div class="mm" style="left:476.30px;top:125.08px;width:0.81px;background:#d4d4d4"></div>
<div class="mm" style="left:458.48px;top:126.70px;width:8.91px;background:#d4d4d4"></div>
<div class="mm" style="left:469.01px;top:126.70px;width:0.81px;background:#d4d4d4"></div>
<div class="mm" style="left:469.82px;top:126.70px;width:13.77px;background:#9cdcfe"></div>
<div class="mm" style="left:458.48px;top:128.32px;width:8.91px;background:#d4d4d4"></div>
<div class="mm" style="left:469.01px;top:128.32px;width:0.81px;background:#d4d4d4"></div>
<div class="mm" style="left:469.82px;top:128.32px;width:3.24px;background:#9cdcfe"></div>
<div class="mm" style="left:473.06px;top:128.32px;width:0.81px;background:#d4d4d4"></div>
<div class="mm" style="left:473.87px;top:128.32px;width:0.81px;background:#b5cea8"></div>
<div class="mm" style="left:474.68px;top:128.32px;width:0.81px;background:#d4d4d4"></div>
<div class="mm" style="left:476.30px;top:128.32px;width:0.81px;background:#b5cea8"></div>
<div class="mm" style="left:477.11px;top:128.32px;width:0.81px;background:#d4d4d4"></div>
<div class="mm" style="left:478.73px;top:128.32px;width:0.81px;background:#b5cea8"></div>
<div class="mm" style="left:479.54px;top:128.32px;width:0.81px;background:#d4d4d4"></div>
<div class="mm" style="left:481.16px;top:128.32px;width:0.81px;background:#b5cea8"></div>
<div class="mm" style="left:481.97px;top:128.32px;width:0.81px;background:#d4d4d4"></div>
<div class="mm" style="left:458.48px;top:131.56px;width:36.45px;background:#9cdcfe"></div>
<div class="mm" style="left:461.72px;top:133.18px;width:4.05px;background:#d4d4d4"></div>
<div class="mm" style="left:467.39px;top:133.18px;width:0.81px;background:#d4d4d4"></div>
<div class="mm" style="left:468.20px;top:133.18px;width:14.58px;background:#ce9178"></div>
<div class="mm" style="left:461.72px;top:134.80px;width:3.24px;background:#d4d4d4"></div>
<div class="mm" style="left:466.58px;top:134.80px;width:0.81px;background:#d4d4d4"></div>
<div class="mm" style="left:467.39px;top:134.80px;width:3.24px;background:#9cdcfe"></div>
<div class="mm" style="left:470.63px;top:134.80px;width:0.81px;background:#d4d4d4"></div>
<div class="mm" style="left:471.44px;top:134.80px;width:2.43px;background:#b5cea8"></div>
<div class="mm" style="left:473.87px;top:134.80px;width:0.81px;background:#d4d4d4"></div>
<div class="mm" style="left:475.49px;top:134.80px;width:2.43px;background:#b5cea8"></div>
<div class="mm" style="left:477.92px;top:134.80px;width:0.81px;background:#d4d4d4"></div>
<div class="mm" style="left:479.54px;top:134.80px;width:2.43px;background:#b5cea8"></div>
<div class="mm" style="left:481.97px;top:134.80px;width:0.81px;background:#d4d4d4"></div>
<div class="mm" style="left:483.59px;top:134.80px;width:0.81px;background:#b5cea8"></div>
<div class="mm" style="left:484.40px;top:134.80px;width:0.81px;background:#d4d4d4"></div>
<div class="mm" style="left:461.72px;top:136.42px;width:9.72px;background:#d4d4d4"></div>
<div class="mm" style="left:473.06px;top:136.42px;width:0.81px;background:#d4d4d4"></div>
<div class="mm" style="left:473.87px;top:136.42px;width:1.62px;background:#b5cea8"></div>
<div class="mm" style="left:461.72px;top:138.04px;width:4.86px;background:#d4d4d4"></div>
<div class="mm" style="left:468.20px;top:138.04px;width:0.81px;background:#d4d4d4"></div>
<div class="mm" style="left:469.01px;top:138.04px;width:0.81px;background:#b5cea8"></div>
<div class="mm" style="left:461.72px;top:139.66px;width:4.86px;background:#d4d4d4"></div>
<div class="mm" style="left:468.20px;top:139.66px;width:0.81px;background:#d4d4d4"></div>
<div class="mm" style="left:469.01px;top:139.66px;width:12.15px;background:#9cdcfe"></div>
<div class="mm" style="left:461.72px;top:141.28px;width:4.86px;background:#d4d4d4"></div>
<div class="mm" style="left:468.20px;top:141.28px;width:0.81px;background:#d4d4d4"></div>
<div class="mm" style="left:469.01px;top:141.28px;width:2.43px;background:#b5cea8"></div>
<div class="mm" style="left:461.72px;top:142.90px;width:4.05px;background:#d4d4d4"></div>
<div class="mm" style="left:467.39px;top:142.90px;width:0.81px;background:#d4d4d4"></div>
<div class="mm" style="left:468.20px;top:142.90px;width:3.24px;background:#b5cea8"></div>
<div class="mm" style="left:461.72px;top:144.52px;width:0.81px;background:#d4d4d4"></div>
<div class="mm" style="left:464.15px;top:144.52px;width:0.81px;background:#d4d4d4"></div>
<div class="mm" style="left:464.96px;top:144.52px;width:1.62px;background:#b5cea8"></div>
<div class="mm" style="left:461.72px;top:146.14px;width:0.81px;background:#d4d4d4"></div>
<div class="mm" style="left:464.15px;top:146.14px;width:0.81px;background:#d4d4d4"></div>
<div class="mm" style="left:464.96px;top:146.14px;width:1.62px;background:#b5cea8"></div>
<div class="mm" style="left:461.72px;top:149.38px;width:28.35px;background:#9cdcfe"></div>
<div class="mm" style="left:464.96px;top:151.00px;width:3.24px;background:#d4d4d4"></div>
<div class="mm" style="left:469.82px;top:151.00px;width:0.81px;background:#d4d4d4"></div>
<div class="mm" style="left:470.63px;top:151.00px;width:12.15px;background:#9cdcfe"></div>
<div class="mm" style="left:464.96px;top:152.62px;width:3.24px;background:#d4d4d4"></div>
<div class="mm" style="left:469.82px;top:152.62px;width:0.81px;background:#d4d4d4"></div>
<div class="mm" style="left:470.63px;top:152.62px;width:1.62px;background:#b5cea8"></div>
<div class="mm" style="left:464.96px;top:154.24px;width:4.86px;background:#d4d4d4"></div>
<div class="mm" style="left:471.44px;top:154.24px;width:0.81px;background:#d4d4d4"></div>
<div class="mm" style="left:472.25px;top:154.24px;width:0.81px;background:#b5cea8"></div>
<div class="mm" style="left:464.96px;top:155.86px;width:4.86px;background:#d4d4d4"></div>
<div class="mm" style="left:471.44px;top:155.86px;width:0.81px;background:#d4d4d4"></div>
<div class="mm" style="left:472.25px;top:155.86px;width:1.62px;background:#b5cea8"></div>
<div class="mm" style="left:464.96px;top:157.48px;width:4.05px;background:#d4d4d4"></div>
<div class="mm" style="left:470.63px;top:157.48px;width:0.81px;background:#d4d4d4"></div>
<div class="mm" style="left:471.44px;top:157.48px;width:2.43px;background:#b5cea8"></div>
<div class="mm" style="left:464.96px;top:159.10px;width:0.81px;background:#d4d4d4"></div>
<div class="mm" style="left:467.39px;top:159.10px;width:0.81px;background:#d4d4d4"></div>
<div class="mm" style="left:468.20px;top:159.10px;width:2.43px;background:#b5cea8"></div>
<div class="mm" style="left:464.96px;top:160.72px;width:3.24px;background:#d4d4d4"></div>
<div class="mm" style="left:469.82px;top:160.72px;width:0.81px;background:#d4d4d4"></div>
<div class="mm" style="left:470.63px;top:160.72px;width:4.05px;background:#9cdcfe"></div>
<div class="mm" style="left:474.68px;top:160.72px;width:8.10px;background:#ce9178"></div>
<div class="mm" style="left:464.96px;top:162.34px;width:6.48px;background:#d4d4d4"></div>
<div class="mm" style="left:473.06px;top:162.34px;width:0.81px;background:#d4d4d4"></div>
<div class="mm" style="left:473.87px;top:162.34px;width:4.86px;background:#9cdcfe"></div>
<div class="mm" style="left:478.73px;top:162.34px;width:0.81px;background:#d4d4d4"></div>
<div class="mm" style="left:479.54px;top:162.34px;width:4.86px;background:#9cdcfe"></div>
<div class="mm" style="left:484.40px;top:162.34px;width:0.81px;background:#d4d4d4"></div>
<div class="mm" style="left:461.72px;top:165.58px;width:29.16px;background:#9cdcfe"></div>
<div class="mm" style="left:464.96px;top:167.20px;width:3.24px;background:#d4d4d4"></div>
<div class="mm" style="left:469.82px;top:167.20px;width:0.81px;background:#d4d4d4"></div>
<div class="mm" style="left:470.63px;top:167.20px;width:14.58px;background:#9cdcfe"></div>
<div class="mm" style="left:464.96px;top:168.82px;width:3.24px;background:#d4d4d4"></div>
<div class="mm" style="left:469.82px;top:168.82px;width:0.81px;background:#d4d4d4"></div>
<div class="mm" style="left:470.63px;top:168.82px;width:4.05px;background:#9cdcfe"></div>
<div class="mm" style="left:474.68px;top:168.82px;width:8.10px;background:#ce9178"></div>
<div class="mm" style="left:464.96px;top:170.44px;width:0.81px;background:#d4d4d4"></div>
<div class="mm" style="left:467.39px;top:170.44px;width:0.81px;background:#d4d4d4"></div>
<div class="mm" style="left:468.20px;top:170.44px;width:2.43px;background:#b5cea8"></div>
<div class="mm" style="left:464.96px;top:172.06px;width:3.24px;background:#d4d4d4"></div>
<div class="mm" style="left:469.82px;top:172.06px;width:0.81px;background:#d4d4d4"></div>
<div class="mm" style="left:470.63px;top:172.06px;width:1.62px;background:#b5cea8"></div>
<div class="mm" style="left:464.96px;top:173.68px;width:4.86px;background:#d4d4d4"></div>
<div class="mm" style="left:471.44px;top:173.68px;width:0.81px;background:#d4d4d4"></div>
<div class="mm" style="left:472.25px;top:173.68px;width:0.81px;background:#b5cea8"></div>
<div class="mm" style="left:464.96px;top:175.30px;width:4.86px;background:#d4d4d4"></div>
<div class="mm" style="left:471.44px;top:175.30px;width:0.81px;background:#d4d4d4"></div>
<div class="mm" style="left:472.25px;top:175.30px;width:1.62px;background:#b5cea8"></div>
<div class="mm" style="left:464.96px;top:176.92px;width:4.05px;background:#d4d4d4"></div>
<div class="mm" style="left:470.63px;top:176.92px;width:0.81px;background:#d4d4d4"></div>
<div class="mm" style="left:471.44px;top:176.92px;width:2.43px;background:#b5cea8"></div>
<div class="mm" style="left:464.96px;top:178.54px;width:3.24px;background:#d4d4d4"></div>
<div class="mm" style="left:469.82px;top:178.54px;width:0.81px;background:#d4d4d4"></div>
<div class="mm" style="left:470.63px;top:178.54px;width:4.05px;background:#9cdcfe"></div>
<div class="mm" style="left:474.68px;top:178.54px;width:8.10px;background:#ce9178"></div>
<div class="mm" style="left:464.96px;top:180.16px;width:6.48px;background:#d4d4d4"></div>
<div class="mm" style="left:473.06px;top:180.16px;width:0.81px;background:#d4d4d4"></div>
<div class="mm" style="left:473.87px;top:180.16px;width:4.86px;background:#9cdcfe"></div>
<div class="mm" style="left:478.73px;top:180.16px;width:0.81px;background:#d4d4d4"></div>
<div class="mm" style="left:479.54px;top:180.16px;width:4.86px;background:#9cdcfe"></div>
<div class="mm" style="left:484.40px;top:180.16px;width:0.81px;background:#d4d4d4"></div>
<div class="mm" style="left:461.72px;top:183.40px;width:27.54px;background:#9cdcfe"></div>
<div class="mm" style="left:464.96px;top:185.02px;width:3.24px;background:#d4d4d4"></div>
<div class="mm" style="left:469.82px;top:185.02px;width:0.81px;background:#d4d4d4"></div>
<div class="mm" style="left:470.63px;top:185.02px;width:11.34px;background:#9cdcfe"></div>
<div class="mm" style="left:464.96px;top:186.64px;width:3.24px;background:#d4d4d4"></div>
<div class="mm" style="left:469.82px;top:186.64px;width:0.81px;background:#d4d4d4"></div>
<div class="mm" style="left:470.63px;top:186.64px;width:1.62px;background:#b5cea8"></div>
<div class="mm" style="left:464.96px;top:188.26px;width:4.86px;background:#d4d4d4"></div>
<div class="mm" style="left:471.44px;top:188.26px;width:0.81px;background:#d4d4d4"></div>
<div class="mm" style="left:472.25px;top:188.26px;width:0.81px;background:#b5cea8"></div>
<div class="mm" style="left:464.96px;top:189.88px;width:4.86px;background:#d4d4d4"></div>
<div class="mm" style="left:471.44px;top:189.88px;width:0.81px;background:#d4d4d4"></div>
<div class="mm" style="left:472.25px;top:189.88px;width:1.62px;background:#b5cea8"></div>
<div class="mm" style="left:464.96px;top:191.50px;width:4.05px;background:#d4d4d4"></div>
<div class="mm" style="left:470.63px;top:191.50px;width:0.81px;background:#d4d4d4"></div>
<div class="mm" style="left:471.44px;top:191.50px;width:2.43px;background:#b5cea8"></div>
<div class="mm" style="left:464.96px;top:193.12px;width:0.81px;background:#d4d4d4"></div>
<div class="mm" style="left:467.39px;top:193.12px;width:0.81px;background:#d4d4d4"></div>
<div class="mm" style="left:468.20px;top:193.12px;width:2.43px;background:#b5cea8"></div>
<div class="mm" style="left:464.96px;top:194.74px;width:3.24px;background:#d4d4d4"></div>
<div class="mm" style="left:469.82px;top:194.74px;width:0.81px;background:#d4d4d4"></div>
<div class="mm" style="left:470.63px;top:194.74px;width:4.05px;background:#9cdcfe"></div>
<div class="mm" style="left:474.68px;top:194.74px;width:8.10px;background:#ce9178"></div>
<div class="mm" style="left:464.96px;top:196.36px;width:6.48px;background:#d4d4d4"></div>
<div class="mm" style="left:473.06px;top:196.36px;width:0.81px;background:#d4d4d4"></div>
<div class="mm" style="left:473.87px;top:196.36px;width:4.86px;background:#9cdcfe"></div>
<div class="mm" style="left:478.73px;top:196.36px;width:0.81px;background:#d4d4d4"></div>
<div class="mm" style="left:479.54px;top:196.36px;width:4.86px;background:#9cdcfe"></div>
<div class="mm" style="left:484.40px;top:196.36px;width:0.81px;background:#d4d4d4"></div>
<div class="mm" style="left:461.72px;top:199.60px;width:36.28px;background:#9cdcfe"></div>
<div class="mm" style="left:464.96px;top:201.22px;width:3.24px;background:#d4d4d4"></div>
<div class="mm" style="left:469.82px;top:201.22px;width:0.81px;background:#d4d4d4"></div>
<div class="mm" style="left:470.63px;top:201.22px;width:13.77px;background:#9cdcfe"></div>
<div class="mm" style="left:464.96px;top:202.84px;width:6.48px;background:#d4d4d4"></div>
<div class="mm" style="left:473.06px;top:202.84px;width:0.81px;background:#d4d4d4"></div>
<div class="mm" style="left:473.87px;top:202.84px;width:6.48px;background:#9cdcfe"></div>
<div class="mm" style="left:480.35px;top:202.84px;width:0.81px;background:#d4d4d4"></div>
<div class="mm" style="left:481.16px;top:202.84px;width:13.77px;background:#ce9178"></div>
<div class="mm" style="left:494.93px;top:202.84px;width:0.81px;background:#d4d4d4"></div>
<div class="mm" style="left:496.55px;top:202.84px;width:1.45px;background:#9cdcfe"></div>
<div class="mm" style="left:464.96px;top:204.46px;width:4.86px;background:#d4d4d4"></div>
<div class="mm" style="left:471.44px;top:204.46px;width:0.81px;background:#d4d4d4"></div>
<div class="mm" style="left:472.25px;top:204.46px;width:1.62px;background:#b5cea8"></div>
<div class="mm" style="left:464.96px;top:206.08px;width:4.05px;background:#d4d4d4"></div>
<div class="mm" style="left:470.63px;top:206.08px;width:0.81px;background:#d4d4d4"></div>
<div class="mm" style="left:471.44px;top:206.08px;width:1.62px;background:#b5cea8"></div>
<div class="mm" style="left:464.96px;top:207.70px;width:0.81px;background:#d4d4d4"></div>
<div class="mm" style="left:467.39px;top:207.70px;width:0.81px;background:#d4d4d4"></div>
<div class="mm" style="left:468.20px;top:207.70px;width:3.24px;background:#b5cea8"></div>
<div class="mm" style="left:464.96px;top:209.32px;width:4.86px;background:#d4d4d4"></div>
<div class="mm" style="left:471.44px;top:209.32px;width:0.81px;background:#d4d4d4"></div>
<div class="mm" style="left:472.25px;top:209.32px;width:0.81px;background:#b5cea8"></div>
<div class="mm" style="left:461.72px;top:212.56px;width:25.11px;background:#9cdcfe"></div>
<div class="mm" style="left:464.96px;top:214.18px;width:3.24px;background:#d4d4d4"></div>
<div class="mm" style="left:469.82px;top:214.18px;width:0.81px;background:#d4d4d4"></div>
<div class="mm" style="left:470.63px;top:214.18px;width:3.24px;background:#9cdcfe"></div>
<div class="mm" style="left:473.87px;top:214.18px;width:0.81px;background:#d4d4d4"></div>
<div class="mm" style="left:474.68px;top:214.18px;width:2.43px;background:#b5cea8"></div>
<div class="mm" style="left:477.11px;top:214.18px;width:0.81px;background:#d4d4d4"></div>
<div class="mm" style="left:478.73px;top:214.18px;width:2.43px;background:#b5cea8"></div>
<div class="mm" style="left:481.16px;top:214.18px;width:0.81px;background:#d4d4d4"></div>
<div class="mm" style="left:482.78px;top:214.18px;width:2.43px;background:#b5cea8"></div>
<div class="mm" style="left:485.21px;top:214.18px;width:0.81px;background:#d4d4d4"></div>
<div class="mm" style="left:486.83px;top:214.18px;width:0.81px;background:#b5cea8"></div>
<div class="mm" style="left:487.64px;top:214.18px;width:0.81px;background:#d4d4d4"></div>
<div class="mm" style="left:464.96px;top:215.80px;width:4.86px;background:#d4d4d4"></div>
<div class="mm" style="left:471.44px;top:215.80px;width:0.81px;background:#d4d4d4"></div>
<div class="mm" style="left:472.25px;top:215.80px;width:0.81px;background:#b5cea8"></div>
<div class="mm" style="left:464.96px;top:217.42px;width:4.05px;background:#d4d4d4"></div>
<div class="mm" style="left:470.63px;top:217.42px;width:0.81px;background:#d4d4d4"></div>
<div class="mm" style="left:471.44px;top:217.42px;width:16.20px;background:#9cdcfe"></div>
<div class="mm" style="left:464.96px;top:219.04px;width:0.81px;background:#d4d4d4"></div>
<div class="mm" style="left:467.39px;top:219.04px;width:0.81px;background:#d4d4d4"></div>
<div class="mm" style="left:468.20px;top:219.04px;width:17.01px;background:#9cdcfe"></div>
<div class="mm" style="left:486.02px;top:219.04px;width:0.81px;background:#d4d4d4"></div>
<div class="mm" style="left:487.64px;top:219.04px;width:0.81px;background:#b5cea8"></div>
<div class="mm" style="left:464.96px;top:220.66px;width:4.86px;background:#d4d4d4"></div>
<div class="mm" style="left:471.44px;top:220.66px;width:0.81px;background:#d4d4d4"></div>
<div class="mm" style="left:472.25px;top:220.66px;width:0.81px;background:#b5cea8"></div>
<div class="mm" style="left:455.24px;top:223.90px;width:15.39px;background:#9cdcfe"></div>
<div class="mm" style="left:458.48px;top:225.52px;width:3.24px;background:#d4d4d4"></div>
<div class="mm" style="left:463.34px;top:225.52px;width:0.81px;background:#d4d4d4"></div>
<div class="mm" style="left:464.15px;top:225.52px;width:4.86px;background:#ce9178"></div>
<div class="mm" style="left:458.48px;top:227.14px;width:6.48px;background:#d4d4d4"></div>
<div class="mm" style="left:466.58px;top:227.14px;width:0.81px;background:#d4d4d4"></div>
<div class="mm" style="left:467.39px;top:227.14px;width:3.24px;background:#9cdcfe"></div>
<div class="mm" style="left:470.63px;top:227.14px;width:0.81px;background:#d4d4d4"></div>
<div class="mm" style="left:471.44px;top:227.14px;width:0.81px;background:#d4d4d4"></div>
<div class="mm" style="left:458.48px;top:228.76px;width:0.81px;background:#d4d4d4"></div>
<div class="mm" style="left:460.91px;top:228.76px;width:0.81px;background:#d4d4d4"></div>
<div class="mm" style="left:461.72px;top:228.76px;width:1.62px;background:#b5cea8"></div>
<div class="mm" style="left:458.48px;top:230.38px;width:0.81px;background:#d4d4d4"></div>
<div class="mm" style="left:460.91px;top:230.38px;width:0.81px;background:#d4d4d4"></div>
<div class="mm" style="left:461.72px;top:230.38px;width:2.43px;background:#b5cea8"></div>
<div class="mm" style="left:458.48px;top:232.00px;width:4.05px;background:#d4d4d4"></div>
<div class="mm" style="left:464.15px;top:232.00px;width:0.81px;background:#d4d4d4"></div>
<div class="mm" style="left:464.96px;top:232.00px;width:2.43px;background:#b5cea8"></div>
<div class="mm" style="left:458.48px;top:233.62px;width:4.86px;background:#d4d4d4"></div>
<div class="mm" style="left:464.96px;top:233.62px;width:0.81px;background:#d4d4d4"></div>
<div class="mm" style="left:465.77px;top:233.62px;width:1.62px;background:#b5cea8"></div>
<div class="mm" style="left:458.48px;top:235.24px;width:4.86px;background:#d4d4d4"></div>
<div class="mm" style="left:464.96px;top:235.24px;width:0.81px;background:#d4d4d4"></div>
<div class="mm" style="left:465.77px;top:235.24px;width:0.81px;background:#b5cea8"></div>
<div class="mm" style="left:455.24px;top:238.48px;width:15.39px;background:#9cdcfe"></div>
<div style="position:absolute;left:452px;top:147.76px;width:46px;height:1.2px;background:#3c3c3c"></div></div>
<div class="sbar"></div>
<div class="slider" style="background:#404040"></div>
<div style="position:absolute;left:499px;top:247px;width:11px;height:2px;background:#8a8a8a"></div>
<div class="status" style="height:15.9px"></div>
<svg style="position:absolute;left:12px;top:583px" width="11" height="11" viewBox="0 0 11 11" fill="none" stroke="#e6f3ff" stroke-width="1.05"><circle cx="5.1" cy="5.2" r="4.5"/><path d="M3.2 3.3l3.8 3.8M7 3.3l-3.8 3.8" stroke-width="1.25"/></svg>
<div class="t" style="left:25.62px;top:581.70px;font-size:10.75px;line-height:14px;color:#ffffff;transform:scaleX(0.8813);">0</div>
<svg style="position:absolute;left:34px;top:582.5px" width="11" height="11" viewBox="0 0 11 11" fill="none" stroke="#e6f3ff" stroke-width="1.05" stroke-linejoin="round"><path d="M5.2 1 10 9.6H.6z"/><path d="M5.2 4v3.2M5.2 8v.9" stroke-width="1.3"/></svg>
<div class="t" style="left:47.60px;top:581.70px;font-size:10.75px;line-height:14px;color:#ffffff;transform:scaleX(0.9204);">0</div>
<div class="t" style="left:247.85px;top:581.70px;font-size:10.75px;line-height:14px;color:#ffffff;transform:scaleX(0.8683);">Ln 49, Col 1</div>
<div class="t" style="left:310.59px;top:581.70px;font-size:10.75px;line-height:14px;color:#ffffff;transform:scaleX(0.8515);">Spaces: 4</div>
<div class="t" style="left:363.00px;top:581.70px;font-size:10.75px;line-height:14px;color:#ffffff;transform:scaleX(0.8668);">UTF-8</div>
<div class="t" style="left:402.07px;top:581.70px;font-size:10.75px;line-height:14px;color:#ffffff;transform:scaleX(0.7937);">CRLF</div>
<div class="t" style="left:436.55px;top:581.70px;font-size:10.75px;line-height:14px;color:#ffffff;transform:scaleX(0.8387);">C#</div>
<div style="position:absolute;left:429.2px;top:573.2px;width:24.80px;height:24.80px;box-sizing:border-box;border:4.2px solid #e21d2b;border-bottom-width:3.6px"></div>
<svg style="position:absolute;left:460px;top:582px" width="14" height="12" viewBox="0 0 14 12" fill="none" stroke="#fff" stroke-width="1.1"><circle cx="5.5" cy="5.8" r="2.2"/><path d="M1.3 11.6Q5.5 6.8 9.7 11.6"/><path d="M5.3 1.4H12.2V5.9H10.3L8.6 7.4"/></svg>
<svg style="position:absolute;left:487px;top:582.5px" width="10" height="11" viewBox="0 0 10 11" fill="none" stroke="#fff" stroke-width="1.1"><path d="M1.6 8.6V4.6a3.4 3.4 0 0 1 6.8 0v4l.8.9H.8z"/><path d="M3.9 10.3h2.2"/></svg>
</div>
</body></html>
